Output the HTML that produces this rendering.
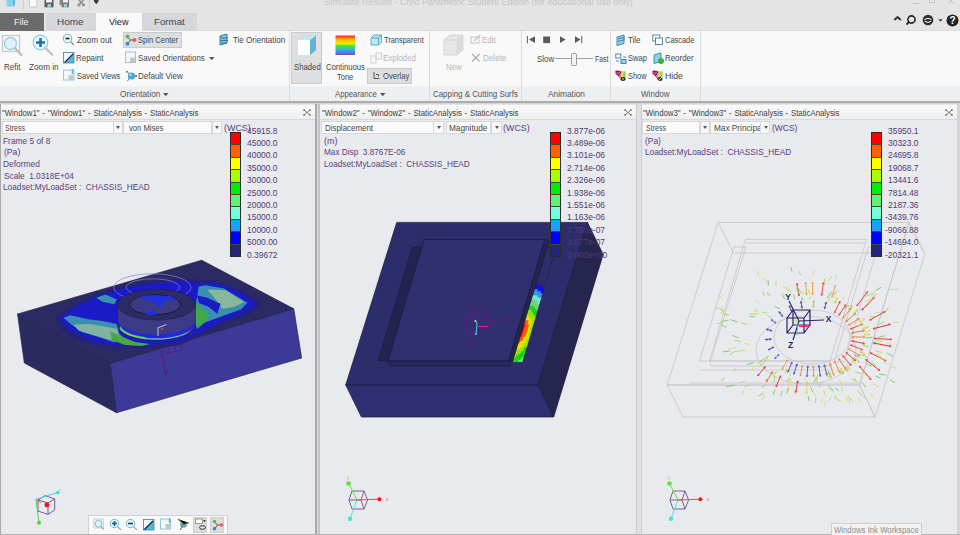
<!DOCTYPE html>
<html><head><meta charset="utf-8">
<style>
*{box-sizing:border-box}
body{margin:0;width:960px;height:535px;overflow:hidden;background:#e4e4e4;font-family:"Liberation Sans", sans-serif;position:relative}
.a{position:absolute}
svg{position:absolute;overflow:visible}
.t{position:absolute;white-space:nowrap;font-size:8.3px;color:#474747;line-height:10px}
.tab{position:absolute;white-space:nowrap;font-size:9.8px;color:#5a5a5a;line-height:12px}
.lg{position:absolute;white-space:nowrap;font-size:9.2px;color:#4e3c74;line-height:12px;transform:scaleX(0.92);transform-origin:0 0}
.info{position:absolute;white-space:nowrap;font-size:8.3px;color:#5a3f7e;line-height:11.5px}
.dd{position:absolute;background:#fbfbfb;border:1px solid #d8d8d8;height:13.5px;font-size:8.3px;color:#474747;line-height:11.5px;padding-left:3.5px;white-space:nowrap;overflow:hidden}
.ddb{position:absolute;background:#f7f7f7;border:1px solid #d8d8d8;height:13.5px}
.ddb:after{content:"";position:absolute;left:2.5px;top:4.5px;border-left:2.8px solid transparent;border-right:2.8px solid transparent;border-top:3.2px solid #555}
.ttl{position:absolute;white-space:nowrap;font-size:8.8px;color:#555;line-height:12px}
.glab{position:absolute;white-space:nowrap;font-size:8.3px;color:#5a5a5a;line-height:10px}
.dis{color:#b5b5b5}
.ft{position:absolute;white-space:pre;transform-origin:0 0}
.btn{position:absolute;background:#dedfe1;border:1px solid #c9cacc}
.panel{position:absolute;top:104px;height:429.5px;background:#e9eaee;border-top:1.5px solid #e4e4e4}
.tbar{position:absolute;left:0;top:0;right:0;height:15px;background:linear-gradient(#fafafa,#eeeeee);border-bottom:1px solid #d9d9d9}
.x{position:absolute;top:5px;width:7.5px;height:6px}
</style></head><body>


<div class="a" style="left:0;top:0;width:960px;height:31px;background:#e4e4e4;border-bottom:1px solid #dadada"></div>
<div class="t" style="left:324.5px;top:-3px;font-size:9px;color:#c4c4c4">Simulate Results - Creo Parametric Student Edition (for educational use only)</div>
<svg style="left:6px;top:-1px" width="10" height="9"><path d="M0.5 0 H7 V6 L5.5 7.8 H0.5 Z" fill="#86d3ef"/><path d="M7 0 H9 V6 L7 7.8 Z" fill="#5fb4da"/></svg>
<div class="a" style="left:23px;top:0;width:1px;height:9.5px;background:#d0d0d0"></div>
<svg style="left:29px;top:-1px" width="10" height="9"><path d="M0.5 0 H8 V8 H0.5 Z" fill="#fafafa" stroke="#c4c4c4" stroke-width="0.9"/></svg>
<svg style="left:44px;top:-1px" width="11" height="9"><path d="M0.5 0 H9.5 V8.3 H0.5 Z" fill="#5a5a5a"/><rect x="2" y="0" width="6" height="3.5" fill="#f0f0f0"/><rect x="3.5" y="5" width="3.5" height="3.3" fill="#8fcfe3"/></svg>
<svg style="left:59px;top:-1px" width="11" height="9"><path d="M0.5 0 H3 V6 H0.5 Z" fill="#8a8a8a"/><path d="M2.5 0 H10 V8.3 H2.5 Z" fill="#7a7a7a"/><rect x="4" y="0" width="5" height="3.5" fill="#f0f0f0"/><rect x="5" y="5" width="3" height="3.3" fill="#8fcfe3"/></svg>
<svg style="left:76.5px;top:-1px" width="9" height="8"><path d="M1 0 L7.5 6.5 M7.5 0 L1 6.5" stroke="#8a8a8a" stroke-width="1.3"/><circle cx="2" cy="6" r="1.3" fill="none" stroke="#8a8a8a" stroke-width="0.8"/><circle cx="6.5" cy="6" r="1.3" fill="none" stroke="#8a8a8a" stroke-width="0.8"/></svg>
<div class="a" style="left:88.5px;top:0;width:1px;height:9.5px;background:#d0d0d0"></div>
<svg style="left:94px;top:-1px" width="5" height="6"><path d="M0 0 H4.5 V2.5 L2.25 5.3 L0 2.5 Z" fill="#3a3a3a"/></svg>
<div class="a" style="left:0;top:13px;width:44.3px;height:17.5px;background:#6b6b6b"></div>
<div class="a" style="left:45.8px;top:13.2px;width:50.2px;height:17.8px;background:#d5d7da"></div>
<div class="a" style="left:96px;top:13px;width:46px;height:18px;background:#f9f9f9"></div>
<div class="a" style="left:142px;top:13.2px;width:55px;height:17.8px;background:#d5d7da"></div>


<div class="a" style="left:912.5px;top:2.8px;width:6.5px;height:1px;background:#c4c4c4"></div>
<div class="a" style="left:929px;top:-1px;width:6px;height:4px;border:1px solid #c8c8c8;border-top:none"></div>
<svg style="left:947px;top:-2px" width="8" height="6"><path d="M1 0 L7 6 M7 0 L1 6" stroke="#c8c8c8" stroke-width="1"/></svg>
<svg style="left:893px;top:15px" width="9" height="7"><path d="M1.3 5 L4.5 2 L7.7 5" stroke="#333" stroke-width="2" fill="none"/></svg>
<svg style="left:905px;top:14px" width="12" height="12"><circle cx="6.5" cy="5.5" r="3.6" stroke="#222" stroke-width="1.6" fill="none"/><path d="M4 8 L1.5 10.5" stroke="#222" stroke-width="1.8"/></svg>
<svg style="left:921.5px;top:14px" width="12" height="12"><circle cx="6" cy="6" r="5.3" fill="#2e2e2e"/><path d="M2.5 5.5 Q6 3 9.5 5.5 M2.8 7.3 Q6 9.5 9.2 7.3" stroke="#fff" stroke-width="1" fill="none"/></svg>
<svg style="left:937.8px;top:18.5px" width="6" height="4"><path d="M0.3 0.3 L4.7 0.3 L2.5 2.8 Z" fill="#444"/></svg>
<svg style="left:946px;top:13.5px" width="13" height="13"><circle cx="6.5" cy="6.5" r="6" fill="#222"/><text x="6.5" y="10.3" text-anchor="middle" font-family="Liberation Sans" font-weight="bold" font-size="10" fill="#fff">?</text></svg>


<div class="a" style="left:0;top:31px;width:960px;height:55px;background:#f9f9f9"></div>
<div class="a" style="left:0;top:86px;width:960px;height:15.3px;background:#eeeff1;border-top:1px solid #f3f3f3"></div>
<div class="a" style="left:289px;top:31px;width:1px;height:70px;background:#dcdcdc"></div>
<div class="a" style="left:429px;top:31px;width:1px;height:70px;background:#dcdcdc"></div>
<div class="a" style="left:521px;top:31px;width:1px;height:70px;background:#dcdcdc"></div>
<div class="a" style="left:610px;top:31px;width:1px;height:70px;background:#dcdcdc"></div>
<div class="a" style="left:699.5px;top:31px;width:1px;height:70px;background:#dcdcdc"></div>
<div class="a" style="left:0;top:101.3px;width:960px;height:1.6px;background:#acacac"></div><div class="a" style="left:0;top:102.9px;width:960px;height:1.1px;background:#d6d6d6"></div>


<svg style="left:1px;top:34px" width="24" height="24"><rect x="1.5" y="1.5" width="17" height="16" fill="#f4f6f7" stroke="#c7c7c7" stroke-width="1.2"/><circle cx="9.5" cy="9.5" r="6" fill="#dff3f8" stroke="#9ccfdf" stroke-width="1.3"/><path d="M13.8 14 L20.5 21" stroke="#bdbdbd" stroke-width="2.4" stroke-linecap="round"/></svg>
<svg style="left:31px;top:33px" width="24" height="24"><circle cx="9.5" cy="9.5" r="7.3" fill="#eef8fb" stroke="#8ccfe0" stroke-width="1.2"/><path d="M9.5 5 V14 M5 9.5 H14" stroke="#1a73a0" stroke-width="2.6"/><path d="M14.5 15 L21 21.5" stroke="#c2c2c2" stroke-width="2.4" stroke-linecap="round"/></svg>
<svg style="left:62px;top:33px" width="14" height="14"><circle cx="5.5" cy="5.5" r="4.2" fill="#eaf6f9" stroke="#6fbcd3" stroke-width="1.1"/><path d="M3.5 5.5 H7.5" stroke="#222" stroke-width="1.6"/><path d="M8.5 8.5 L12 12" stroke="#999" stroke-width="1.5"/></svg>
<svg style="left:63px;top:52px" width="12" height="12"><rect x="0.5" y="0.5" width="10.5" height="10.5" fill="#5ab5d6" stroke="#3a8fb0" stroke-width="0.8"/><path d="M1 11 L11 1 L11 11 Z" fill="#ffffff" opacity="0.0"/><path d="M1.5 10.5 L10 2" stroke="#1a2a40" stroke-width="1.3"/><path d="M1 1 L10 1 L1 10 Z" fill="#f4f7f8"/></svg>
<svg style="left:63px;top:69px" width="12" height="12"><rect x="0.5" y="1" width="10.5" height="10" fill="#f2f7f9" stroke="#8ecbe0" stroke-width="1"/><rect x="5.5" y="6" width="5" height="5" fill="#c6c6c6"/><path d="M9.5 0 V5" stroke="#5ab5d6" stroke-width="1.4"/></svg>
<div class="btn" style="left:123px;top:32px;width:58.5px;height:15.5px"></div>
<svg style="left:125px;top:34px" width="12" height="12"><path d="M2 2.5 L5.5 6 L10 6 M5.5 6 L2.5 10" stroke="#555" stroke-width="1" fill="none"/><circle cx="2.5" cy="2.5" r="2" fill="#6ab04c"/><circle cx="9.5" cy="6" r="2" fill="#e06060"/><circle cx="2.5" cy="9.8" r="2" fill="#3a8fc0"/></svg>
<svg style="left:125px;top:51px" width="12" height="13"><rect x="0.5" y="1" width="10" height="10.5" fill="#f5f8f9" stroke="#8ecbe0" stroke-width="1"/><rect x="5" y="6.5" width="5.5" height="5" fill="#c6c6c6"/></svg>
<svg style="left:208.5px;top:56.5px" width="6" height="4"><path d="M0 0 H5.5 L2.75 3.2 Z" fill="#555"/></svg>
<svg style="left:124.5px;top:70px" width="13" height="12"><path d="M1.5 1 L6 5.5 L12 6 M6 5.5 L2.5 11" stroke="#8a7a5a" stroke-width="1" fill="none"/><circle cx="6.5" cy="6" r="3.6" fill="#45a8d8"/><circle cx="5.5" cy="5" r="1.4" fill="#9ad4ee"/><path d="M1 1 L3 1.5 L1.5 3 Z M12.5 6 L10.5 4.8 L10.5 7.2 Z" fill="#555"/></svg>
<svg style="left:218px;top:33px" width="12" height="13"><path d="M2 3 L9 1 V10 L2 12 Z" fill="#7fc3e0" stroke="#2f6f96" stroke-width="0.9"/><path d="M3 5 H10 M3 7.5 H10 M3 10 H9" stroke="#2f6f96" stroke-width="0.9"/></svg>
<svg style="left:163px;top:93px" width="6" height="4"><path d="M0 0 H5.5 L2.75 3.2 Z" fill="#555"/></svg>


<div class="btn" style="left:291.2px;top:31.9px;width:31.2px;height:52.5px"></div>
<svg style="left:296px;top:34px" width="22" height="24"><path d="M2 6 L8 1.5 L20 1.5 L20 16 L14 21 L2 21 Z" fill="#7cc8e4"/><path d="M2 6 L14 6 L14 21 L2 21 Z" fill="#ffffff"/><path d="M14 6 L20 1.5 L20 16 L14 21 Z" fill="#63b3d6"/><path d="M2 6 L8 1.5 L20 1.5 L14 6 Z" fill="#c3e7f5"/></svg>
<svg style="left:335px;top:34.5px" width="21" height="20"><defs><linearGradient id="rb" x1="0" y1="0" x2="0" y2="1"><stop offset="0" stop-color="#ff2020"/><stop offset="0.2" stop-color="#ffb000"/><stop offset="0.4" stop-color="#f0f000"/><stop offset="0.55" stop-color="#40e040"/><stop offset="0.75" stop-color="#30b0f0"/><stop offset="1" stop-color="#8040d0"/></linearGradient></defs><rect x="0.5" y="0.5" width="19.5" height="19.5" fill="url(#rb)"/></svg>
<svg style="left:370px;top:33.5px" width="13" height="12"><path d="M1 4 L4 1 L11.5 1 L11.5 8 L8.5 11 L1 11 Z" fill="#bfe6f4" stroke="#4aa6cc" stroke-width="0.9"/><path d="M1 4 H8.5 V11 M8.5 4 L11.5 1" stroke="#4aa6cc" stroke-width="0.9" fill="none"/></svg>
<svg style="left:370px;top:52px" width="13" height="12"><rect x="1" y="4" width="5" height="7" fill="none" stroke="#cfcfcf" stroke-width="1"/><rect x="6" y="1" width="5.5" height="6" fill="none" stroke="#cfcfcf" stroke-width="1"/></svg>
<div class="btn" style="left:367.4px;top:67.5px;width:45px;height:16.1px"></div>
<svg style="left:371.5px;top:71px" width="9" height="10"><path d="M2 1 V7.5 H7.5 M4 3.5 H6.5 V5.5" stroke="#555" stroke-width="1" fill="none"/></svg>
<svg style="left:380px;top:93px" width="6" height="4"><path d="M0 0 H5.5 L2.75 3.2 Z" fill="#555"/></svg>


<svg style="left:442px;top:33px" width="23" height="24"><path d="M2 7 L8 2 L21 2 L21 17 L15 22 L2 22 Z" fill="#e6e6e6" stroke="#d0d0d0" stroke-width="0.8"/><path d="M2 7 H15 V22 M15 7 L21 2" stroke="#d0d0d0" stroke-width="0.8" fill="none"/><path d="M15 7 L21 2 L21 17 L15 22 Z" fill="#dadada"/></svg>
<svg style="left:470px;top:34px" width="12" height="11"><rect x="1" y="3" width="8" height="6" fill="none" stroke="#c4c4c4" stroke-width="1"/><path d="M4 7 L10 1" stroke="#c4c4c4" stroke-width="1.5"/></svg>
<svg style="left:470.5px;top:53px" width="10" height="10"><path d="M1 1 L8.5 8.5 M8.5 1 L1 8.5" stroke="#b0b0b0" stroke-width="1.3"/></svg>


<svg style="left:526px;top:35px" width="60" height="10"><path d="M1.4 1 V8.3" stroke="#5a5a5a" stroke-width="1"/><path d="M9 1.2 V8 L3 4.6 Z" fill="#5a5a5a"/><rect x="17.2" y="1.5" width="6.9" height="6.6" fill="#5a5a5a"/><path d="M34 1.2 V8 L39.6 4.6 Z" fill="#5a5a5a"/><path d="M49 1.2 V8 L54.6 4.6 Z" fill="#5a5a5a"/><path d="M55.8 1 V8.3" stroke="#5a5a5a" stroke-width="1"/></svg>
<div class="a" style="left:555px;top:58px;width:37.5px;height:1px;background:#a4a4a4"></div>
<div class="a" style="left:570.6px;top:52.5px;width:6px;height:13px;background:#f3f3f3;border:1px solid #9a9a9a;border-radius:1.5px"></div>


<svg style="left:614.5px;top:34px" width="12" height="12"><path d="M2 3 L9 1 V9.5 L2 11.5 Z" fill="#8fd0ea" stroke="#3a7fa6" stroke-width="0.9"/><path d="M3 5 L10 3 M3 7.5 L10 5.5" stroke="#3a7fa6" stroke-width="0.9"/></svg>
<svg style="left:614.5px;top:52.5px" width="12" height="12"><rect x="0.8" y="1" width="5" height="4" fill="#fff" stroke="#3a7fa6" stroke-width="0.9"/><rect x="6" y="6.5" width="5" height="4" fill="#8fd0ea" stroke="#3a7fa6" stroke-width="0.9"/><path d="M1 8 H4 M8 4 H11" stroke="#3a7fa6" stroke-width="0.9"/></svg>
<svg style="left:614.5px;top:70px" width="12" height="12"><defs><linearGradient id="pal" x1="0" y1="0" x2="1" y2="0"><stop offset="0" stop-color="#c02060"/><stop offset="0.35" stop-color="#e040c0"/><stop offset="0.65" stop-color="#f0e040"/><stop offset="1" stop-color="#60d060"/></linearGradient></defs><path d="M0.5 1 L3 0.5 L10.5 1.5 L10.5 8 L6 10 L3 6 L0.5 4 Z" fill="url(#pal)"/><path d="M0.5 1 L6 2 L3 6" stroke="#2a2a2a" stroke-width="0.8" fill="none"/><ellipse cx="8" cy="9" rx="2.6" ry="1.9" fill="#2a2a2a"/><circle cx="8" cy="9" r="0.8" fill="#eee"/></svg>
<svg style="left:652px;top:34px" width="12" height="12"><rect x="0.8" y="1" width="7" height="6" fill="#fff" stroke="#3a7fa6" stroke-width="0.9"/><rect x="3.5" y="4" width="7" height="6.5" fill="#fff" stroke="#3a7fa6" stroke-width="0.9"/></svg>
<svg style="left:652px;top:52px" width="13" height="13"><path d="M2 3 L9 1 V9.5 L2 11.5 Z" fill="#8fd0ea" stroke="#3a7fa6" stroke-width="0.9"/><circle cx="9" cy="9" r="3" fill="#3cb040"/></svg>
<svg style="left:652px;top:70px" width="12" height="12"><path d="M0.5 1 L3 0.5 L10.5 1.5 L10.5 8 L6 10 L3 6 L0.5 4 Z" fill="url(#pal)"/><path d="M0.5 1 L6 2 L3 6" stroke="#2a2a2a" stroke-width="0.8" fill="none"/><ellipse cx="8" cy="9" rx="2.6" ry="1.9" fill="#2a2a2a"/><path d="M5.5 11 L10.5 7" stroke="#eee" stroke-width="0.8"/></svg>


<div class="a" style="left:0;top:104px;width:960px;height:431px;background:#e0e0e4"></div>
<div class="a" style="left:0;top:104px;width:1.3px;height:431px;background:#a9a9a9"></div>
<div class="a" style="left:315.3px;top:104px;width:2.2px;height:431px;background:#a9a9a9"></div><div class="a" style="left:318.2px;top:104px;width:1.5px;height:431px;background:#c4c4c6"></div>
<div class="a" style="left:636.2px;top:104px;width:1px;height:431px;background:#cdcdd1"></div>
<div class="a" style="left:641px;top:104px;width:1px;height:431px;background:#cdcdd1"></div>
<div class="a" style="left:957px;top:104px;width:3px;height:431px;background:#d4d4d4"></div>
<div class="a" style="left:0;top:533.5px;width:960px;height:1.5px;background:#b5b5b5"></div>

<div class="panel" style="left:1.3px;width:314px">
<div class="tbar"></div>
<svg style="left:301.5px;top:4px" width="8" height="7"><path d="M1.2 1.2 L6.8 5.8 M6.8 1.2 L1.2 5.8" stroke="#707070" stroke-width="0.9"/><path d="M0.3 0.3 h1.7 v1.7 h-1.7 Z M6 0.3 h1.7 v1.7 h-1.7 Z M0.3 5 h1.7 v1.7 h-1.7 Z M6 5 h1.7 v1.7 h-1.7 Z" fill="#7a7a7a"/></svg>
</div>
<div class="panel" style="left:320.4px;width:315.8px">
<div class="tbar"></div>
<svg style="left:303.3px;top:4px" width="8" height="7"><path d="M1.2 1.2 L6.8 5.8 M6.8 1.2 L1.2 5.8" stroke="#707070" stroke-width="0.9"/><path d="M0.3 0.3 h1.7 v1.7 h-1.7 Z M6 0.3 h1.7 v1.7 h-1.7 Z M0.3 5 h1.7 v1.7 h-1.7 Z M6 5 h1.7 v1.7 h-1.7 Z" fill="#7a7a7a"/></svg>
</div>
<div class="panel" style="left:642px;width:315px">
<div class="tbar"></div>
<svg style="left:302.5px;top:4px" width="8" height="7"><path d="M1.2 1.2 L6.8 5.8 M6.8 1.2 L1.2 5.8" stroke="#707070" stroke-width="0.9"/><path d="M0.3 0.3 h1.7 v1.7 h-1.7 Z M6 0.3 h1.7 v1.7 h-1.7 Z M0.3 5 h1.7 v1.7 h-1.7 Z M6 5 h1.7 v1.7 h-1.7 Z" fill="#7a7a7a"/></svg>
</div>

<div class="dd" style="left:1.5px;top:120.8px;width:112.3px"></div>
<div class="ddb" style="left:112.8px;top:120.8px;width:10.5px"></div>
<div class="dd" style="left:123.3px;top:120.8px;width:89.2px"></div>
<div class="ddb" style="left:211.8px;top:120.8px;width:10.5px"></div>

<div class="dd" style="left:321.4px;top:120.8px;width:112.9px"></div>
<div class="ddb" style="left:433.3px;top:120.8px;width:10.5px"></div>
<div class="dd" style="left:445.5px;top:120.8px;width:45.5px"></div>
<div class="ddb" style="left:491px;top:120.8px;width:10.5px"></div>

<div class="dd" style="left:642px;top:120.8px;width:58px"></div>
<div class="ddb" style="left:699.5px;top:120.8px;width:10px"></div>
<div class="dd" style="left:710.2px;top:120.8px;width:50.8px"></div>
<div class="ddb" style="left:760.2px;top:120.8px;width:10px"></div>




<svg style="left:0;top:0" width="960" height="535" viewBox="0 0 960 535"><polygon points="17.5,314.0 201.7,260.2 293.8,308.8 110.3,363.5" fill="#2c2a62" stroke="#1c1b40" stroke-width="0.6" />
<polygon points="17.5,314.0 110.3,363.5 116.5,412.8 24.3,363.0" fill="#2b2a5e" stroke="#1c1b40" stroke-width="0.6" />
<polygon points="110.3,363.5 293.8,308.8 301.7,358.0 116.5,412.8" fill="#3c3a96" stroke="#1c1b40" stroke-width="0.6" />
<polygon points="55.0,318.0 74.0,305.0 96.0,294.0 120.0,286.0 150.0,281.0 180.0,278.0 215.0,280.0 242.0,290.0 262.0,304.0 248.0,315.0 226.0,324.0 205.0,334.0 180.0,345.0 150.0,349.0 120.0,349.0 100.0,347.0 80.0,341.0 62.0,330.0" fill="#24237c" stroke="none" stroke-width="0" />
<polygon points="59.5,317.7 75.0,307.0 96.0,297.0 120.0,289.0 150.0,284.0 180.0,281.0 195.4,283.5 215.0,283.0 240.0,292.0 257.6,303.7 245.0,312.0 224.0,320.5 205.0,330.0 180.0,341.0 150.0,345.0 125.0,345.0 110.4,344.7 90.0,340.0 70.0,330.0" fill="#1a1ac6" stroke="none" stroke-width="0" />
<polygon points="96.1,297.8 105.6,294.6 116.8,299.4 114.4,304.2 102.5,301.8" fill="#3a8fb0" stroke="none" stroke-width="0" />
<polygon points="63.5,317.7 70.7,315.3 88.2,319.3 102.5,320.9 116.8,324.0 119.2,333.6 126.3,340.0 113.6,342.3 97.7,336.8 81.8,332.0 70.7,324.0" fill="#3a8fb0" stroke="none" stroke-width="0" />
<polygon points="73.8,324.8 89.7,324.0 104.0,326.4 116.8,328.8 120.0,338.4 110.4,340.0 94.5,335.2 78.6,330.4" fill="#80b4a0" stroke="none" stroke-width="0" />
<polygon points="110.0,331.0 120.0,336.0 135.0,342.0 150.0,344.0 142.0,346.0 125.0,345.0 112.0,340.0" fill="#4aa840" stroke="none" stroke-width="0" />
<polygon points="198.7,286.8 205.5,285.2 224.0,288.5 247.5,302.8 240.8,309.5 224.0,315.4 210.5,320.5 196.2,325.5 195.4,307.0" fill="#3a8fb0" stroke="none" stroke-width="0" />
<polygon points="207.0,289.4 225.6,290.2 244.0,302.0 234.0,307.0 222.3,308.7 213.9,297.0" fill="#88b89c" stroke="none" stroke-width="0" />
<polygon points="197.0,295.3 207.0,297.8 220.6,303.7 217.2,313.7 208.8,307.0 199.0,303.0" fill="#1a1ac6" stroke="none" stroke-width="0" />
<polygon points="196.0,303.0 204.0,310.0 209.0,316.0 205.5,322.0 197.0,328.9 194.0,320.0" fill="#40a848" stroke="none" stroke-width="0" />
<ellipse cx="152.4" cy="287.4" rx="38.6" ry="13.6" fill="none" stroke="#8a7fd8" stroke-width="0.7"/>
<ellipse cx="152.9" cy="287.4" rx="26.7" ry="8.6" fill="none" stroke="#8a7fd8" stroke-width="0.7"/>
<path d="M117.6 304.7 V325 A38.9 15.3 0 0 0 195.4 325 V304.7 Z" fill="#3d3b86" stroke="#1e1d45" stroke-width="0.6"/>
<path d="M118.1 325.5 A38.9 15.3 0 0 0 194.9 325.5 L195.4 319 A38.9 15.3 0 0 1 117.6 319 Z" fill="#2426d8" opacity="0.95"/>
<path d="M121.6 330 A35.9 13.3 0 0 0 191.4 329 L192.4 327.5 A36.9 13.8 0 0 1 120.6 328 Z" fill="#60d0c0" opacity="0.85"/>
<path d="M119.6 329 A35.9 13.3 0 0 0 146.5 339 L144.5 337 A35.9 13.3 0 0 1 120.6 326 Z" fill="#70e040" opacity="0.8"/>
<ellipse cx="156.5" cy="304.7" rx="38.9" ry="15.3" fill="#2c2b64" stroke="#1e1d45" stroke-width="0.6"/>
<ellipse cx="155.1" cy="304.75" rx="25.4" ry="10" fill="#3c3a85" stroke="#1a193e" stroke-width="1"/>
<polygon points="140.0,296.0 150.0,295.5 170.0,296.0 176.0,299.0 165.0,301.0 160.0,308.0 152.0,301.0 142.0,299.0" fill="#2030e0" stroke="none" stroke-width="0" />
<ellipse cx="151" cy="313" rx="6" ry="2" fill="#2030e8"/>
<path d="M158 336 V327.8 L166.5 324.5" stroke="#a0e8f0" stroke-width="0.9" fill="none"/><circle cx="162" cy="329" r="1.2" fill="#e03040"/>
<path d="M161 350 L166 375 M162 351 L169 353 L182 350 L181 344 M169 353 L168 346 M176 346 L174 352" stroke="#5a1a7a" stroke-width="0.9" fill="none"/><path d="M164 369 L166 375 L168 369" stroke="#5a1a7a" stroke-width="0.9" fill="none"/><path d="M189 327 L192 336" stroke="#5a1a7a" stroke-width="1" fill="none"/><polygon points="396.7,222.4 587.5,222.4 538.0,385.0 345.7,385.0" fill="#2e2d6c" stroke="#1a1940" stroke-width="0.7" />
<polygon points="345.7,385.0 538.0,385.0 553.7,417.0 361.4,417.0" fill="#2f2e72" stroke="#1a1940" stroke-width="0.7" />
<polygon points="587.5,222.4 603.2,254.4 553.7,417.0 538.0,385.0" fill="#26254e" stroke="#1a1940" stroke-width="0.7" />
<polygon points="412.4,247.0 424.5,247.0 389.0,361.0 378.0,361.0" fill="#242350" stroke="#1a1940" stroke-width="0.6" />
<polygon points="546.8,247.0 556.1,247.0 522.6,362.0 512.5,362.0" fill="#2e2d6c" stroke="#1a1940" stroke-width="0.6" />
<polygon points="537.4,279.0 539.3,279.0 538.6,281.1 536.8,281.1" fill="#2e2d6c" stroke="#2e2d6c" stroke-width="0.3" />
<polygon points="539.3,279.0 541.1,279.0 540.5,281.1 538.6,281.1" fill="#2e2d6c" stroke="#2e2d6c" stroke-width="0.3" />
<polygon points="541.1,279.0 542.9,279.0 542.3,281.1 540.5,281.1" fill="#2e2d6c" stroke="#2e2d6c" stroke-width="0.3" />
<polygon points="542.9,279.0 544.8,279.0 544.2,281.1 542.3,281.1" fill="#2e2d6c" stroke="#2e2d6c" stroke-width="0.3" />
<polygon points="544.8,279.0 546.6,279.0 546.0,281.1 544.2,281.1" fill="#2e2d6c" stroke="#2e2d6c" stroke-width="0.3" />
<polygon points="536.8,281.1 538.6,281.1 538.0,283.1 536.2,283.1" fill="#2e2d6c" stroke="#2e2d6c" stroke-width="0.3" />
<polygon points="538.6,281.1 540.5,281.1 539.9,283.1 538.0,283.1" fill="#2e2d6c" stroke="#2e2d6c" stroke-width="0.3" />
<polygon points="540.5,281.1 542.3,281.1 541.7,283.1 539.9,283.1" fill="#2e2d6c" stroke="#2e2d6c" stroke-width="0.3" />
<polygon points="542.3,281.1 544.2,281.1 543.6,283.1 541.7,283.1" fill="#2e2d6c" stroke="#2e2d6c" stroke-width="0.3" />
<polygon points="544.2,281.1 546.0,281.1 545.4,283.1 543.6,283.1" fill="#2e2d6c" stroke="#2e2d6c" stroke-width="0.3" />
<polygon points="536.2,283.1 538.0,283.1 537.4,285.2 535.5,285.2" fill="#2e2d6c" stroke="#2e2d6c" stroke-width="0.3" />
<polygon points="538.0,283.1 539.9,283.1 539.2,285.2 537.4,285.2" fill="#2e2d6c" stroke="#2e2d6c" stroke-width="0.3" />
<polygon points="539.9,283.1 541.7,283.1 541.1,285.2 539.2,285.2" fill="#2e2d6c" stroke="#2e2d6c" stroke-width="0.3" />
<polygon points="541.7,283.1 543.6,283.1 543.0,285.2 541.1,285.2" fill="#2e2d6c" stroke="#2e2d6c" stroke-width="0.3" />
<polygon points="543.6,283.1 545.4,283.1 544.8,285.2 543.0,285.2" fill="#2e2d6c" stroke="#2e2d6c" stroke-width="0.3" />
<polygon points="535.5,285.2 537.4,285.2 536.8,287.3 534.9,287.3" fill="#1010f0" stroke="#1010f0" stroke-width="0.3" />
<polygon points="537.4,285.2 539.2,285.2 538.6,287.3 536.8,287.3" fill="#1010f0" stroke="#1010f0" stroke-width="0.3" />
<polygon points="539.2,285.2 541.1,285.2 540.5,287.3 538.6,287.3" fill="#1010f0" stroke="#1010f0" stroke-width="0.3" />
<polygon points="541.1,285.2 543.0,285.2 542.3,287.3 540.5,287.3" fill="#2e2d6c" stroke="#2e2d6c" stroke-width="0.3" />
<polygon points="543.0,285.2 544.8,285.2 544.2,287.3 542.3,287.3" fill="#2e2d6c" stroke="#2e2d6c" stroke-width="0.3" />
<polygon points="534.9,287.3 536.8,287.3 536.1,289.4 534.3,289.4" fill="#1010f0" stroke="#1010f0" stroke-width="0.3" />
<polygon points="536.8,287.3 538.6,287.3 538.0,289.4 536.1,289.4" fill="#1010f0" stroke="#1010f0" stroke-width="0.3" />
<polygon points="538.6,287.3 540.5,287.3 539.9,289.4 538.0,289.4" fill="#1010f0" stroke="#1010f0" stroke-width="0.3" />
<polygon points="540.5,287.3 542.3,287.3 541.7,289.4 539.9,289.4" fill="#1010f0" stroke="#1010f0" stroke-width="0.3" />
<polygon points="542.3,287.3 544.2,287.3 543.6,289.4 541.7,289.4" fill="#1010f0" stroke="#1010f0" stroke-width="0.3" />
<polygon points="534.3,289.4 536.1,289.4 535.5,291.4 533.6,291.4" fill="#30a0f0" stroke="#30a0f0" stroke-width="0.3" />
<polygon points="536.1,289.4 538.0,289.4 537.4,291.4 535.5,291.4" fill="#30a0f0" stroke="#30a0f0" stroke-width="0.3" />
<polygon points="538.0,289.4 539.9,289.4 539.2,291.4 537.4,291.4" fill="#1010f0" stroke="#1010f0" stroke-width="0.3" />
<polygon points="539.9,289.4 541.7,289.4 541.1,291.4 539.2,291.4" fill="#1010f0" stroke="#1010f0" stroke-width="0.3" />
<polygon points="541.7,289.4 543.6,289.4 543.0,291.4 541.1,291.4" fill="#1010f0" stroke="#1010f0" stroke-width="0.3" />
<polygon points="533.6,291.4 535.5,291.4 534.9,293.5 533.0,293.5" fill="#30a0f0" stroke="#30a0f0" stroke-width="0.3" />
<polygon points="535.5,291.4 537.4,291.4 536.8,293.5 534.9,293.5" fill="#30a0f0" stroke="#30a0f0" stroke-width="0.3" />
<polygon points="537.4,291.4 539.2,291.4 538.6,293.5 536.8,293.5" fill="#30a0f0" stroke="#30a0f0" stroke-width="0.3" />
<polygon points="539.2,291.4 541.1,291.4 540.5,293.5 538.6,293.5" fill="#30a0f0" stroke="#30a0f0" stroke-width="0.3" />
<polygon points="541.1,291.4 543.0,291.4 542.4,293.5 540.5,293.5" fill="#1010f0" stroke="#1010f0" stroke-width="0.3" />
<polygon points="533.0,293.5 534.9,293.5 534.3,295.6 532.4,295.6" fill="#30a0f0" stroke="#30a0f0" stroke-width="0.3" />
<polygon points="534.9,293.5 536.8,293.5 536.1,295.6 534.3,295.6" fill="#30a0f0" stroke="#30a0f0" stroke-width="0.3" />
<polygon points="536.8,293.5 538.6,293.5 538.0,295.6 536.1,295.6" fill="#30a0f0" stroke="#30a0f0" stroke-width="0.3" />
<polygon points="538.6,293.5 540.5,293.5 539.9,295.6 538.0,295.6" fill="#30a0f0" stroke="#30a0f0" stroke-width="0.3" />
<polygon points="540.5,293.5 542.4,293.5 541.8,295.6 539.9,295.6" fill="#30a0f0" stroke="#30a0f0" stroke-width="0.3" />
<polygon points="532.4,295.6 534.3,295.6 533.6,297.7 531.7,297.7" fill="#80f0d8" stroke="#80f0d8" stroke-width="0.3" />
<polygon points="534.3,295.6 536.1,295.6 535.5,297.7 533.6,297.7" fill="#80f0d8" stroke="#80f0d8" stroke-width="0.3" />
<polygon points="536.1,295.6 538.0,295.6 537.4,297.7 535.5,297.7" fill="#80f0d8" stroke="#80f0d8" stroke-width="0.3" />
<polygon points="538.0,295.6 539.9,295.6 539.3,297.7 537.4,297.7" fill="#30a0f0" stroke="#30a0f0" stroke-width="0.3" />
<polygon points="539.9,295.6 541.8,295.6 541.2,297.7 539.3,297.7" fill="#30a0f0" stroke="#30a0f0" stroke-width="0.3" />
<polygon points="531.7,297.7 533.6,297.7 533.0,299.8 531.1,299.8" fill="#80f0d8" stroke="#80f0d8" stroke-width="0.3" />
<polygon points="533.6,297.7 535.5,297.7 534.9,299.8 533.0,299.8" fill="#80f0d8" stroke="#80f0d8" stroke-width="0.3" />
<polygon points="535.5,297.7 537.4,297.7 536.8,299.8 534.9,299.8" fill="#80f0d8" stroke="#80f0d8" stroke-width="0.3" />
<polygon points="537.4,297.7 539.3,297.7 538.7,299.8 536.8,299.8" fill="#80f0d8" stroke="#80f0d8" stroke-width="0.3" />
<polygon points="539.3,297.7 541.2,297.7 540.6,299.8 538.7,299.8" fill="#80f0d8" stroke="#80f0d8" stroke-width="0.3" />
<polygon points="531.1,299.8 533.0,299.8 532.4,301.8 530.5,301.8" fill="#70e080" stroke="#70e080" stroke-width="0.3" />
<polygon points="533.0,299.8 534.9,299.8 534.3,301.8 532.4,301.8" fill="#70e080" stroke="#70e080" stroke-width="0.3" />
<polygon points="534.9,299.8 536.8,299.8 536.2,301.8 534.3,301.8" fill="#80f0d8" stroke="#80f0d8" stroke-width="0.3" />
<polygon points="536.8,299.8 538.7,299.8 538.1,301.8 536.2,301.8" fill="#80f0d8" stroke="#80f0d8" stroke-width="0.3" />
<polygon points="538.7,299.8 540.6,299.8 539.9,301.8 538.1,301.8" fill="#80f0d8" stroke="#80f0d8" stroke-width="0.3" />
<polygon points="530.5,301.8 532.4,301.8 531.8,303.9 529.9,303.9" fill="#70e080" stroke="#70e080" stroke-width="0.3" />
<polygon points="532.4,301.8 534.3,301.8 533.6,303.9 531.8,303.9" fill="#70e080" stroke="#70e080" stroke-width="0.3" />
<polygon points="534.3,301.8 536.2,301.8 535.5,303.9 533.6,303.9" fill="#70e080" stroke="#70e080" stroke-width="0.3" />
<polygon points="536.2,301.8 538.1,301.8 537.4,303.9 535.5,303.9" fill="#70e080" stroke="#70e080" stroke-width="0.3" />
<polygon points="538.1,301.8 539.9,301.8 539.3,303.9 537.4,303.9" fill="#80f0d8" stroke="#80f0d8" stroke-width="0.3" />
<polygon points="529.9,303.9 531.8,303.9 531.1,306.0 529.2,306.0" fill="#70e080" stroke="#70e080" stroke-width="0.3" />
<polygon points="531.8,303.9 533.6,303.9 533.0,306.0 531.1,306.0" fill="#70e080" stroke="#70e080" stroke-width="0.3" />
<polygon points="533.6,303.9 535.5,303.9 534.9,306.0 533.0,306.0" fill="#70e080" stroke="#70e080" stroke-width="0.3" />
<polygon points="535.5,303.9 537.4,303.9 536.8,306.0 534.9,306.0" fill="#70e080" stroke="#70e080" stroke-width="0.3" />
<polygon points="537.4,303.9 539.3,303.9 538.7,306.0 536.8,306.0" fill="#70e080" stroke="#70e080" stroke-width="0.3" />
<polygon points="529.2,306.0 531.1,306.0 530.5,308.1 528.6,308.1" fill="#20d820" stroke="#20d820" stroke-width="0.3" />
<polygon points="531.1,306.0 533.0,306.0 532.4,308.1 530.5,308.1" fill="#20d820" stroke="#20d820" stroke-width="0.3" />
<polygon points="533.0,306.0 534.9,306.0 534.3,308.1 532.4,308.1" fill="#20d820" stroke="#20d820" stroke-width="0.3" />
<polygon points="534.9,306.0 536.8,306.0 536.2,308.1 534.3,308.1" fill="#70e080" stroke="#70e080" stroke-width="0.3" />
<polygon points="536.8,306.0 538.7,306.0 538.1,308.1 536.2,308.1" fill="#70e080" stroke="#70e080" stroke-width="0.3" />
<polygon points="528.6,308.1 530.5,308.1 529.9,310.1 528.0,310.1" fill="#20d820" stroke="#20d820" stroke-width="0.3" />
<polygon points="530.5,308.1 532.4,308.1 531.8,310.1 529.9,310.1" fill="#20d820" stroke="#20d820" stroke-width="0.3" />
<polygon points="532.4,308.1 534.3,308.1 533.7,310.1 531.8,310.1" fill="#20d820" stroke="#20d820" stroke-width="0.3" />
<polygon points="534.3,308.1 536.2,308.1 535.6,310.1 533.7,310.1" fill="#20d820" stroke="#20d820" stroke-width="0.3" />
<polygon points="536.2,308.1 538.1,308.1 537.5,310.1 535.6,310.1" fill="#70e080" stroke="#70e080" stroke-width="0.3" />
<polygon points="528.0,310.1 529.9,310.1 529.2,312.2 527.3,312.2" fill="#a8f000" stroke="#a8f000" stroke-width="0.3" />
<polygon points="529.9,310.1 531.8,310.1 531.2,312.2 529.2,312.2" fill="#a8f000" stroke="#a8f000" stroke-width="0.3" />
<polygon points="531.8,310.1 533.7,310.1 533.1,312.2 531.2,312.2" fill="#20d820" stroke="#20d820" stroke-width="0.3" />
<polygon points="533.7,310.1 535.6,310.1 535.0,312.2 533.1,312.2" fill="#20d820" stroke="#20d820" stroke-width="0.3" />
<polygon points="535.6,310.1 537.5,310.1 536.9,312.2 535.0,312.2" fill="#20d820" stroke="#20d820" stroke-width="0.3" />
<polygon points="527.3,312.2 529.2,312.2 528.6,314.3 526.7,314.3" fill="#a8f000" stroke="#a8f000" stroke-width="0.3" />
<polygon points="529.2,312.2 531.2,312.2 530.5,314.3 528.6,314.3" fill="#a8f000" stroke="#a8f000" stroke-width="0.3" />
<polygon points="531.2,312.2 533.1,312.2 532.5,314.3 530.5,314.3" fill="#a8f000" stroke="#a8f000" stroke-width="0.3" />
<polygon points="533.1,312.2 535.0,312.2 534.4,314.3 532.5,314.3" fill="#20d820" stroke="#20d820" stroke-width="0.3" />
<polygon points="535.0,312.2 536.9,312.2 536.3,314.3 534.4,314.3" fill="#20d820" stroke="#20d820" stroke-width="0.3" />
<polygon points="526.7,314.3 528.6,314.3 528.0,316.4 526.1,316.4" fill="#f8f000" stroke="#f8f000" stroke-width="0.3" />
<polygon points="528.6,314.3 530.5,314.3 529.9,316.4 528.0,316.4" fill="#a8f000" stroke="#a8f000" stroke-width="0.3" />
<polygon points="530.5,314.3 532.5,314.3 531.8,316.4 529.9,316.4" fill="#a8f000" stroke="#a8f000" stroke-width="0.3" />
<polygon points="532.5,314.3 534.4,314.3 533.8,316.4 531.8,316.4" fill="#a8f000" stroke="#a8f000" stroke-width="0.3" />
<polygon points="534.4,314.3 536.3,314.3 535.7,316.4 533.8,316.4" fill="#20d820" stroke="#20d820" stroke-width="0.3" />
<polygon points="526.1,316.4 528.0,316.4 527.4,318.4 525.4,318.4" fill="#f8f000" stroke="#f8f000" stroke-width="0.3" />
<polygon points="528.0,316.4 529.9,316.4 529.3,318.4 527.4,318.4" fill="#f8f000" stroke="#f8f000" stroke-width="0.3" />
<polygon points="529.9,316.4 531.8,316.4 531.2,318.4 529.3,318.4" fill="#a8f000" stroke="#a8f000" stroke-width="0.3" />
<polygon points="531.8,316.4 533.8,316.4 533.2,318.4 531.2,318.4" fill="#a8f000" stroke="#a8f000" stroke-width="0.3" />
<polygon points="533.8,316.4 535.7,316.4 535.1,318.4 533.2,318.4" fill="#a8f000" stroke="#a8f000" stroke-width="0.3" />
<polygon points="525.4,318.4 527.4,318.4 526.7,320.5 524.8,320.5" fill="#f8f000" stroke="#f8f000" stroke-width="0.3" />
<polygon points="527.4,318.4 529.3,318.4 528.7,320.5 526.7,320.5" fill="#f8f000" stroke="#f8f000" stroke-width="0.3" />
<polygon points="529.3,318.4 531.2,318.4 530.6,320.5 528.7,320.5" fill="#f8f000" stroke="#f8f000" stroke-width="0.3" />
<polygon points="531.2,318.4 533.2,318.4 532.5,320.5 530.6,320.5" fill="#a8f000" stroke="#a8f000" stroke-width="0.3" />
<polygon points="533.2,318.4 535.1,318.4 534.5,320.5 532.5,320.5" fill="#a8f000" stroke="#a8f000" stroke-width="0.3" />
<polygon points="524.8,320.5 526.7,320.5 526.1,322.6 524.2,322.6" fill="#ff6000" stroke="#ff6000" stroke-width="0.3" />
<polygon points="526.7,320.5 528.7,320.5 528.1,322.6 526.1,322.6" fill="#ff6000" stroke="#ff6000" stroke-width="0.3" />
<polygon points="528.7,320.5 530.6,320.5 530.0,322.6 528.1,322.6" fill="#f8f000" stroke="#f8f000" stroke-width="0.3" />
<polygon points="530.6,320.5 532.5,320.5 531.9,322.6 530.0,322.6" fill="#f8f000" stroke="#f8f000" stroke-width="0.3" />
<polygon points="532.5,320.5 534.5,320.5 533.9,322.6 531.9,322.6" fill="#a8f000" stroke="#a8f000" stroke-width="0.3" />
<polygon points="524.2,322.6 526.1,322.6 525.5,324.6 523.5,324.6" fill="#ff6000" stroke="#ff6000" stroke-width="0.3" />
<polygon points="526.1,322.6 528.1,322.6 527.4,324.6 525.5,324.6" fill="#ff6000" stroke="#ff6000" stroke-width="0.3" />
<polygon points="528.1,322.6 530.0,322.6 529.4,324.6 527.4,324.6" fill="#f8f000" stroke="#f8f000" stroke-width="0.3" />
<polygon points="530.0,322.6 531.9,322.6 531.3,324.6 529.4,324.6" fill="#f8f000" stroke="#f8f000" stroke-width="0.3" />
<polygon points="531.9,322.6 533.9,322.6 533.3,324.6 531.3,324.6" fill="#a8f000" stroke="#a8f000" stroke-width="0.3" />
<polygon points="523.5,324.6 525.5,324.6 524.9,326.7 522.9,326.7" fill="#ff0000" stroke="#ff0000" stroke-width="0.3" />
<polygon points="525.5,324.6 527.4,324.6 526.8,326.7 524.9,326.7" fill="#ff6000" stroke="#ff6000" stroke-width="0.3" />
<polygon points="527.4,324.6 529.4,324.6 528.8,326.7 526.8,326.7" fill="#ff6000" stroke="#ff6000" stroke-width="0.3" />
<polygon points="529.4,324.6 531.3,324.6 530.7,326.7 528.8,326.7" fill="#f8f000" stroke="#f8f000" stroke-width="0.3" />
<polygon points="531.3,324.6 533.3,324.6 532.6,326.7 530.7,326.7" fill="#a8f000" stroke="#a8f000" stroke-width="0.3" />
<polygon points="522.9,326.7 524.9,326.7 524.2,328.8 522.3,328.8" fill="#ff0000" stroke="#ff0000" stroke-width="0.3" />
<polygon points="524.9,326.7 526.8,326.7 526.2,328.8 524.2,328.8" fill="#ff6000" stroke="#ff6000" stroke-width="0.3" />
<polygon points="526.8,326.7 528.8,326.7 528.1,328.8 526.2,328.8" fill="#ff6000" stroke="#ff6000" stroke-width="0.3" />
<polygon points="528.8,326.7 530.7,326.7 530.1,328.8 528.1,328.8" fill="#f8f000" stroke="#f8f000" stroke-width="0.3" />
<polygon points="530.7,326.7 532.6,326.7 532.0,328.8 530.1,328.8" fill="#a8f000" stroke="#a8f000" stroke-width="0.3" />
<polygon points="522.3,328.8 524.2,328.8 523.6,330.9 521.7,330.9" fill="#ff0000" stroke="#ff0000" stroke-width="0.3" />
<polygon points="524.2,328.8 526.2,328.8 525.6,330.9 523.6,330.9" fill="#ff6000" stroke="#ff6000" stroke-width="0.3" />
<polygon points="526.2,328.8 528.1,328.8 527.5,330.9 525.6,330.9" fill="#ff6000" stroke="#ff6000" stroke-width="0.3" />
<polygon points="528.1,328.8 530.1,328.8 529.5,330.9 527.5,330.9" fill="#f8f000" stroke="#f8f000" stroke-width="0.3" />
<polygon points="530.1,328.8 532.0,328.8 531.4,330.9 529.5,330.9" fill="#a8f000" stroke="#a8f000" stroke-width="0.3" />
<polygon points="521.7,330.9 523.6,330.9 523.0,332.9 521.0,332.9" fill="#ff0000" stroke="#ff0000" stroke-width="0.3" />
<polygon points="523.6,330.9 525.6,330.9 524.9,332.9 523.0,332.9" fill="#ff6000" stroke="#ff6000" stroke-width="0.3" />
<polygon points="525.6,330.9 527.5,330.9 526.9,332.9 524.9,332.9" fill="#ff6000" stroke="#ff6000" stroke-width="0.3" />
<polygon points="527.5,330.9 529.5,330.9 528.9,332.9 526.9,332.9" fill="#f8f000" stroke="#f8f000" stroke-width="0.3" />
<polygon points="529.5,330.9 531.4,330.9 530.8,332.9 528.9,332.9" fill="#a8f000" stroke="#a8f000" stroke-width="0.3" />
<polygon points="521.0,332.9 523.0,332.9 522.4,335.0 520.4,335.0" fill="#ff0000" stroke="#ff0000" stroke-width="0.3" />
<polygon points="523.0,332.9 524.9,332.9 524.3,335.0 522.4,335.0" fill="#ff6000" stroke="#ff6000" stroke-width="0.3" />
<polygon points="524.9,332.9 526.9,332.9 526.3,335.0 524.3,335.0" fill="#ff6000" stroke="#ff6000" stroke-width="0.3" />
<polygon points="526.9,332.9 528.9,332.9 528.2,335.0 526.3,335.0" fill="#f8f000" stroke="#f8f000" stroke-width="0.3" />
<polygon points="528.9,332.9 530.8,332.9 530.2,335.0 528.2,335.0" fill="#a8f000" stroke="#a8f000" stroke-width="0.3" />
<polygon points="520.4,335.0 522.4,335.0 521.7,337.1 519.8,337.1" fill="#ff0000" stroke="#ff0000" stroke-width="0.3" />
<polygon points="522.4,335.0 524.3,335.0 523.7,337.1 521.7,337.1" fill="#ff6000" stroke="#ff6000" stroke-width="0.3" />
<polygon points="524.3,335.0 526.3,335.0 525.7,337.1 523.7,337.1" fill="#ff6000" stroke="#ff6000" stroke-width="0.3" />
<polygon points="526.3,335.0 528.2,335.0 527.6,337.1 525.7,337.1" fill="#f8f000" stroke="#f8f000" stroke-width="0.3" />
<polygon points="528.2,335.0 530.2,335.0 529.6,337.1 527.6,337.1" fill="#a8f000" stroke="#a8f000" stroke-width="0.3" />
<polygon points="519.8,337.1 521.7,337.1 521.1,339.2 519.1,339.2" fill="#ff6000" stroke="#ff6000" stroke-width="0.3" />
<polygon points="521.7,337.1 523.7,337.1 523.1,339.2 521.1,339.2" fill="#ff6000" stroke="#ff6000" stroke-width="0.3" />
<polygon points="523.7,337.1 525.7,337.1 525.1,339.2 523.1,339.2" fill="#f8f000" stroke="#f8f000" stroke-width="0.3" />
<polygon points="525.7,337.1 527.6,337.1 527.0,339.2 525.1,339.2" fill="#f8f000" stroke="#f8f000" stroke-width="0.3" />
<polygon points="527.6,337.1 529.6,337.1 529.0,339.2 527.0,339.2" fill="#a8f000" stroke="#a8f000" stroke-width="0.3" />
<polygon points="519.1,339.2 521.1,339.2 520.5,341.2 518.5,341.2" fill="#ff6000" stroke="#ff6000" stroke-width="0.3" />
<polygon points="521.1,339.2 523.1,339.2 522.5,341.2 520.5,341.2" fill="#ff6000" stroke="#ff6000" stroke-width="0.3" />
<polygon points="523.1,339.2 525.1,339.2 524.4,341.2 522.5,341.2" fill="#f8f000" stroke="#f8f000" stroke-width="0.3" />
<polygon points="525.1,339.2 527.0,339.2 526.4,341.2 524.4,341.2" fill="#f8f000" stroke="#f8f000" stroke-width="0.3" />
<polygon points="527.0,339.2 529.0,339.2 528.4,341.2 526.4,341.2" fill="#a8f000" stroke="#a8f000" stroke-width="0.3" />
<polygon points="518.5,341.2 520.5,341.2 519.9,343.3 517.9,343.3" fill="#ff6000" stroke="#ff6000" stroke-width="0.3" />
<polygon points="520.5,341.2 522.5,341.2 521.8,343.3 519.9,343.3" fill="#f8f000" stroke="#f8f000" stroke-width="0.3" />
<polygon points="522.5,341.2 524.4,341.2 523.8,343.3 521.8,343.3" fill="#f8f000" stroke="#f8f000" stroke-width="0.3" />
<polygon points="524.4,341.2 526.4,341.2 525.8,343.3 523.8,343.3" fill="#f8f000" stroke="#f8f000" stroke-width="0.3" />
<polygon points="526.4,341.2 528.4,341.2 527.8,343.3 525.8,343.3" fill="#a8f000" stroke="#a8f000" stroke-width="0.3" />
<polygon points="517.9,343.3 519.9,343.3 519.2,345.4 517.2,345.4" fill="#f8f000" stroke="#f8f000" stroke-width="0.3" />
<polygon points="519.9,343.3 521.8,343.3 521.2,345.4 519.2,345.4" fill="#f8f000" stroke="#f8f000" stroke-width="0.3" />
<polygon points="521.8,343.3 523.8,343.3 523.2,345.4 521.2,345.4" fill="#f8f000" stroke="#f8f000" stroke-width="0.3" />
<polygon points="523.8,343.3 525.8,343.3 525.2,345.4 523.2,345.4" fill="#a8f000" stroke="#a8f000" stroke-width="0.3" />
<polygon points="525.8,343.3 527.8,343.3 527.2,345.4 525.2,345.4" fill="#a8f000" stroke="#a8f000" stroke-width="0.3" />
<polygon points="517.2,345.4 519.2,345.4 518.6,347.5 516.6,347.5" fill="#f8f000" stroke="#f8f000" stroke-width="0.3" />
<polygon points="519.2,345.4 521.2,345.4 520.6,347.5 518.6,347.5" fill="#f8f000" stroke="#f8f000" stroke-width="0.3" />
<polygon points="521.2,345.4 523.2,345.4 522.6,347.5 520.6,347.5" fill="#f8f000" stroke="#f8f000" stroke-width="0.3" />
<polygon points="523.2,345.4 525.2,345.4 524.6,347.5 522.6,347.5" fill="#a8f000" stroke="#a8f000" stroke-width="0.3" />
<polygon points="525.2,345.4 527.2,345.4 526.6,347.5 524.6,347.5" fill="#a8f000" stroke="#a8f000" stroke-width="0.3" />
<polygon points="516.6,347.5 518.6,347.5 518.0,349.6 516.0,349.6" fill="#f8f000" stroke="#f8f000" stroke-width="0.3" />
<polygon points="518.6,347.5 520.6,347.5 520.0,349.6 518.0,349.6" fill="#f8f000" stroke="#f8f000" stroke-width="0.3" />
<polygon points="520.6,347.5 522.6,347.5 522.0,349.6 520.0,349.6" fill="#a8f000" stroke="#a8f000" stroke-width="0.3" />
<polygon points="522.6,347.5 524.6,347.5 524.0,349.6 522.0,349.6" fill="#a8f000" stroke="#a8f000" stroke-width="0.3" />
<polygon points="524.6,347.5 526.6,347.5 526.0,349.6 524.0,349.6" fill="#20d820" stroke="#20d820" stroke-width="0.3" />
<polygon points="516.0,349.6 518.0,349.6 517.3,351.6 515.3,351.6" fill="#a8f000" stroke="#a8f000" stroke-width="0.3" />
<polygon points="518.0,349.6 520.0,349.6 519.3,351.6 517.3,351.6" fill="#a8f000" stroke="#a8f000" stroke-width="0.3" />
<polygon points="520.0,349.6 522.0,349.6 521.3,351.6 519.3,351.6" fill="#a8f000" stroke="#a8f000" stroke-width="0.3" />
<polygon points="522.0,349.6 524.0,349.6 523.3,351.6 521.3,351.6" fill="#a8f000" stroke="#a8f000" stroke-width="0.3" />
<polygon points="524.0,349.6 526.0,349.6 525.3,351.6 523.3,351.6" fill="#20d820" stroke="#20d820" stroke-width="0.3" />
<polygon points="515.3,351.6 517.3,351.6 516.7,353.7 514.7,353.7" fill="#a8f000" stroke="#a8f000" stroke-width="0.3" />
<polygon points="517.3,351.6 519.3,351.6 518.7,353.7 516.7,353.7" fill="#a8f000" stroke="#a8f000" stroke-width="0.3" />
<polygon points="519.3,351.6 521.3,351.6 520.7,353.7 518.7,353.7" fill="#a8f000" stroke="#a8f000" stroke-width="0.3" />
<polygon points="521.3,351.6 523.3,351.6 522.7,353.7 520.7,353.7" fill="#20d820" stroke="#20d820" stroke-width="0.3" />
<polygon points="523.3,351.6 525.3,351.6 524.7,353.7 522.7,353.7" fill="#20d820" stroke="#20d820" stroke-width="0.3" />
<polygon points="514.7,353.7 516.7,353.7 516.1,355.8 514.1,355.8" fill="#a8f000" stroke="#a8f000" stroke-width="0.3" />
<polygon points="516.7,353.7 518.7,353.7 518.1,355.8 516.1,355.8" fill="#a8f000" stroke="#a8f000" stroke-width="0.3" />
<polygon points="518.7,353.7 520.7,353.7 520.1,355.8 518.1,355.8" fill="#20d820" stroke="#20d820" stroke-width="0.3" />
<polygon points="520.7,353.7 522.7,353.7 522.1,355.8 520.1,355.8" fill="#20d820" stroke="#20d820" stroke-width="0.3" />
<polygon points="522.7,353.7 524.7,353.7 524.1,355.8 522.1,355.8" fill="#20d820" stroke="#20d820" stroke-width="0.3" />
<polygon points="514.1,355.8 516.1,355.8 515.5,357.9 513.5,357.9" fill="#a8f000" stroke="#a8f000" stroke-width="0.3" />
<polygon points="516.1,355.8 518.1,355.8 517.5,357.9 515.5,357.9" fill="#20d820" stroke="#20d820" stroke-width="0.3" />
<polygon points="518.1,355.8 520.1,355.8 519.5,357.9 517.5,357.9" fill="#20d820" stroke="#20d820" stroke-width="0.3" />
<polygon points="520.1,355.8 522.1,355.8 521.5,357.9 519.5,357.9" fill="#20d820" stroke="#20d820" stroke-width="0.3" />
<polygon points="522.1,355.8 524.1,355.8 523.5,357.9 521.5,357.9" fill="#20d820" stroke="#20d820" stroke-width="0.3" />
<polygon points="513.5,357.9 515.5,357.9 514.8,359.9 512.8,359.9" fill="#20d820" stroke="#20d820" stroke-width="0.3" />
<polygon points="515.5,357.9 517.5,357.9 516.9,359.9 514.8,359.9" fill="#20d820" stroke="#20d820" stroke-width="0.3" />
<polygon points="517.5,357.9 519.5,357.9 518.9,359.9 516.9,359.9" fill="#20d820" stroke="#20d820" stroke-width="0.3" />
<polygon points="519.5,357.9 521.5,357.9 520.9,359.9 518.9,359.9" fill="#20d820" stroke="#20d820" stroke-width="0.3" />
<polygon points="521.5,357.9 523.5,357.9 522.9,359.9 520.9,359.9" fill="#70e080" stroke="#70e080" stroke-width="0.3" />
<polygon points="512.8,359.9 514.8,359.9 514.2,362.0 512.2,362.0" fill="#20d820" stroke="#20d820" stroke-width="0.3" />
<polygon points="514.8,359.9 516.9,359.9 516.2,362.0 514.2,362.0" fill="#20d820" stroke="#20d820" stroke-width="0.3" />
<polygon points="516.9,359.9 518.9,359.9 518.3,362.0 516.2,362.0" fill="#20d820" stroke="#20d820" stroke-width="0.3" />
<polygon points="518.9,359.9 520.9,359.9 520.3,362.0 518.3,362.0" fill="#70e080" stroke="#70e080" stroke-width="0.3" />
<polygon points="520.9,359.9 522.9,359.9 522.3,362.0 520.3,362.0" fill="#70e080" stroke="#70e080" stroke-width="0.3" />
<polygon points="424.0,239.4 545.0,239.4 508.6,361.0 388.0,361.0" fill="#302f70" stroke="#1a1940" stroke-width="0.8" />
<polygon points="388.0,361.0 508.6,361.0 510.5,366.0 390.0,366.0" fill="#2a295e" stroke="#1a1940" stroke-width="0.6" />
<polygon points="545.0,239.4 549.0,241.0 512.5,362.0 508.6,361.0" fill="#25244e" stroke="#1a1940" stroke-width="0.6" />
<g stroke="#56207c" stroke-width="0.95" fill="none">
<path d="M466 318 H483 V333 H466 Z M472 310 H489 V325 H472 Z M466 318 L472 310 M483 318 L489 310 M483 333 L489 325 M466 333 L472 325"/>
<path d="M468 301 L478 321 L503 320 M478 321 L472 340"/>
</g>
<path d="M475.5 321 L477 324 L476 334" stroke="#40d0e8" stroke-width="1" fill="none"/><circle cx="475.5" cy="321" r="1.1" fill="#a0f040"/><circle cx="476" cy="334" r="1.1" fill="#40d0e8"/><path d="M478 326.5 H488" stroke="#e03040" stroke-width="1"/>
<text x="467" y="300" text-anchor="middle" font-family="Liberation Sans" font-weight="bold" font-size="7.8" fill="#56207c">Y</text>
<text x="507.5" y="321.8" text-anchor="middle" font-family="Liberation Sans" font-weight="bold" font-size="7.8" fill="#56207c">X</text>
<text x="469.5" y="347.5" text-anchor="middle" font-family="Liberation Sans" font-weight="bold" font-size="7.8" fill="#56207c">Z</text><g stroke="#c4c4ca" stroke-width="0.8" fill="none">
<polygon points="718.2,222.4 909.0,222.4 859.5,385.0 667.2,385.0"/>
<polygon points="667.2,385.0 859.5,385.0 875.2,417.0 682.9,417.0"/>
<polygon points="909.0,222.4 924.7,254.4 875.2,417.0 859.5,385.0"/>
<polygon points="745.5,239.4 866.5,239.4 830.1,361.0 709.5,361.0"/>
<polygon points="733.9,247.0 746.0,247.0 710.5,361.0 699.5,361.0"/>
<polygon points="868.3,247.0 877.6,247.0 844.1,362.0 834.0,362.0"/>
<polygon points="709.5,361.0 830.1,361.0 832.0,366.0 711.5,366.0"/>
<ellipse cx="812" cy="337" rx="38" ry="27"/><ellipse cx="806" cy="350" rx="50" ry="34"/>
<path d="M718.2 222.4 L734 254 M909 222.4 L925 254 M746 243 H866 M735 253 H877 M700 370 H834 M690 383 H860"/>
</g>
<g fill="none" stroke-linecap="butt">
<path d="M852.0 337.0 L865.0 337.0" stroke="#f08040" stroke-width="0.9"/>
<path d="M863.0 338.0 L865.0 337.0 L863.0 336.0" stroke="#f08040" stroke-width="0.7"/>
<path d="M854.0 338.0 L852.0 337.0 L854.0 336.0" stroke="#f08040" stroke-width="0.7"/>
<path d="M851.6 341.0 L864.4 343.5" stroke="#d83838" stroke-width="0.9"/>
<path d="M862.2 344.1 L864.4 343.5 L862.6 342.1" stroke="#d83838" stroke-width="0.7"/>
<path d="M853.4 342.4 L851.6 341.0 L853.8 340.4" stroke="#d83838" stroke-width="0.7"/>
<path d="M850.5 345.0 L862.5 349.8" stroke="#e04030" stroke-width="0.9"/>
<path d="M860.3 350.0 L862.5 349.8 L861.0 348.1" stroke="#e04030" stroke-width="0.7"/>
<path d="M851.9 346.7 L850.5 345.0 L852.7 344.8" stroke="#e04030" stroke-width="0.7"/>
<path d="M848.5 348.8 L859.6 355.6" stroke="#f08040" stroke-width="0.9"/>
<path d="M857.4 355.4 L859.6 355.6 L858.4 353.7" stroke="#f08040" stroke-width="0.7"/>
<path d="M849.7 350.7 L848.5 348.8 L850.8 349.0" stroke="#f08040" stroke-width="0.7"/>
<path d="M845.9 352.4 L855.8 360.9" stroke="#e04030" stroke-width="0.9"/>
<path d="M853.6 360.3 L855.8 360.9 L854.9 358.8" stroke="#e04030" stroke-width="0.7"/>
<path d="M846.8 354.4 L845.9 352.4 L848.1 352.9" stroke="#e04030" stroke-width="0.7"/>
<path d="M842.6 355.6 L851.1 365.5" stroke="#e04030" stroke-width="0.9"/>
<path d="M849.1 364.6 L851.1 365.5 L850.6 363.3" stroke="#e04030" stroke-width="0.7"/>
<path d="M843.2 357.8 L842.6 355.6 L844.7 356.5" stroke="#e04030" stroke-width="0.7"/>
<path d="M838.8 358.6 L845.9 369.4" stroke="#e86a30" stroke-width="0.9"/>
<path d="M843.9 368.3 L845.9 369.4 L845.6 367.2" stroke="#e86a30" stroke-width="0.7"/>
<path d="M839.0 360.8 L838.8 358.6 L840.7 359.7" stroke="#e86a30" stroke-width="0.7"/>
<path d="M834.4 361.0 L840.1 372.7" stroke="#f08040" stroke-width="0.9"/>
<path d="M838.3 371.4 L840.1 372.7 L840.1 370.5" stroke="#f08040" stroke-width="0.7"/>
<path d="M834.3 363.3 L834.4 361.0 L836.1 362.4" stroke="#f08040" stroke-width="0.7"/>
<path d="M829.5 363.1 L833.9 375.3" stroke="#f08040" stroke-width="0.9"/>
<path d="M832.3 373.8 L833.9 375.3 L834.1 373.1" stroke="#f08040" stroke-width="0.7"/>
<path d="M829.3 365.3 L829.5 363.1 L831.1 364.6" stroke="#f08040" stroke-width="0.7"/>
<path d="M824.4 364.6 L826.9 375.3" stroke="#4848c0" stroke-width="0.9"/>
<path d="M825.5 373.6 L826.9 375.3 L827.4 373.1" stroke="#4848c0" stroke-width="0.7"/>
<path d="M823.8 366.8 L824.4 364.6 L825.8 366.3" stroke="#4848c0" stroke-width="0.7"/>
<path d="M818.9 365.6 L820.3 376.5" stroke="#4848c0" stroke-width="0.9"/>
<path d="M819.1 374.6 L820.3 376.5 L821.1 374.4" stroke="#4848c0" stroke-width="0.7"/>
<path d="M818.2 367.7 L818.9 365.6 L820.2 367.4" stroke="#4848c0" stroke-width="0.7"/>
<path d="M813.4 366.0 L813.7 377.0" stroke="#f08a40" stroke-width="0.9"/>
<path d="M812.6 375.0 L813.7 377.0 L814.6 375.0" stroke="#f08a40" stroke-width="0.7"/>
<path d="M812.4 368.0 L813.4 366.0 L814.4 368.0" stroke="#f08a40" stroke-width="0.7"/>
<path d="M807.8 365.8 L807.0 376.8" stroke="#5050c8" stroke-width="0.9"/>
<path d="M806.1 374.7 L807.0 376.8 L808.1 374.9" stroke="#5050c8" stroke-width="0.7"/>
<path d="M806.7 367.8 L807.8 365.8 L808.7 367.9" stroke="#5050c8" stroke-width="0.7"/>
<path d="M802.3 365.1 L800.4 376.0" stroke="#f08a40" stroke-width="0.9"/>
<path d="M799.7 373.8 L800.4 376.0 L801.7 374.2" stroke="#f08a40" stroke-width="0.7"/>
<path d="M801.0 366.9 L802.3 365.1 L803.0 367.3" stroke="#f08a40" stroke-width="0.7"/>
<path d="M797.0 363.9 L793.9 374.4" stroke="#4848c0" stroke-width="0.9"/>
<path d="M793.5 372.2 L793.9 374.4 L795.4 372.8" stroke="#4848c0" stroke-width="0.7"/>
<path d="M795.5 365.5 L797.0 363.9 L797.4 366.1" stroke="#4848c0" stroke-width="0.7"/>
<path d="M792.0 362.1 L787.8 372.3" stroke="#5050c8" stroke-width="0.9"/>
<path d="M787.6 370.0 L787.8 372.3 L789.4 370.8" stroke="#5050c8" stroke-width="0.7"/>
<path d="M790.3 363.6 L792.0 362.1 L792.2 364.3" stroke="#5050c8" stroke-width="0.7"/>
<path d="M787.4 359.9 L782.0 369.4" stroke="#e8a040" stroke-width="0.9"/>
<path d="M782.1 367.2 L782.0 369.4 L783.8 368.2" stroke="#e8a040" stroke-width="0.7"/>
<path d="M785.5 361.1 L787.4 359.9 L787.3 362.1" stroke="#e8a040" stroke-width="0.7"/>
<path d="M779.0 354.4 L774.8 358.6" stroke="#5a5ad0" stroke-width="0.9"/>
<path d="M775.5 356.5 L774.8 358.6 L776.9 357.9" stroke="#5a5ad0" stroke-width="0.7"/>
<path d="M776.9 355.1 L779.0 354.4 L778.3 356.5" stroke="#5a5ad0" stroke-width="0.7"/>
<path d="M773.7 347.1 L768.3 349.8" stroke="#4040b8" stroke-width="0.9"/>
<path d="M769.6 348.0 L768.3 349.8 L770.5 349.8" stroke="#4040b8" stroke-width="0.7"/>
<path d="M771.4 347.1 L773.7 347.1 L772.3 348.9" stroke="#4040b8" stroke-width="0.7"/>
<path d="M771.3 339.1 L765.3 339.6" stroke="#4040b8" stroke-width="0.9"/>
<path d="M767.2 338.5 L765.3 339.6 L767.4 340.4" stroke="#4040b8" stroke-width="0.7"/>
<path d="M769.2 338.3 L771.3 339.1 L769.4 340.3" stroke="#4040b8" stroke-width="0.7"/>
<path d="M772.1 330.8 L766.3 329.2" stroke="#4040b8" stroke-width="0.9"/>
<path d="M768.5 328.8 L766.3 329.2 L768.0 330.7" stroke="#4040b8" stroke-width="0.7"/>
<path d="M770.5 329.3 L772.1 330.8 L769.9 331.2" stroke="#4040b8" stroke-width="0.7"/>
<path d="M776.0 323.1 L771.1 319.6" stroke="#5a5ad0" stroke-width="0.9"/>
<path d="M773.3 319.9 L771.1 319.6 L772.2 321.6" stroke="#5a5ad0" stroke-width="0.7"/>
<path d="M775.0 321.1 L776.0 323.1 L773.8 322.7" stroke="#5a5ad0" stroke-width="0.7"/>
<path d="M782.7 316.5 L779.0 311.7" stroke="#4040b8" stroke-width="0.9"/>
<path d="M781.0 312.7 L779.0 311.7 L779.4 313.9" stroke="#4040b8" stroke-width="0.7"/>
<path d="M782.2 314.3 L782.7 316.5 L780.7 315.5" stroke="#4040b8" stroke-width="0.7"/>
<path d="M791.6 311.4 L789.3 305.8" stroke="#4040b8" stroke-width="0.9"/>
<path d="M791.0 307.3 L789.3 305.8 L789.1 308.1" stroke="#4040b8" stroke-width="0.7"/>
<path d="M791.8 309.2 L791.6 311.4 L789.9 309.9" stroke="#4040b8" stroke-width="0.7"/>
<path d="M802.1 308.3 L800.9 301.4" stroke="#4040b8" stroke-width="0.9"/>
<path d="M802.2 303.2 L800.9 301.4 L800.3 303.6" stroke="#4040b8" stroke-width="0.7"/>
<path d="M802.8 306.2 L802.1 308.3 L800.8 306.5" stroke="#4040b8" stroke-width="0.7"/>
<path d="M813.4 307.4 L813.6 300.4" stroke="#a0d040" stroke-width="0.9"/>
<path d="M814.6 302.5 L813.6 300.4 L812.6 302.4" stroke="#a0d040" stroke-width="0.7"/>
<path d="M814.5 305.5 L813.4 307.4 L812.5 305.4" stroke="#a0d040" stroke-width="0.7"/>
<path d="M824.6 308.9 L826.2 302.1" stroke="#4040b8" stroke-width="0.9"/>
<path d="M826.7 304.2 L826.2 302.1 L824.8 303.8" stroke="#4040b8" stroke-width="0.7"/>
<path d="M826.0 307.2 L824.6 308.9 L824.1 306.7" stroke="#4040b8" stroke-width="0.7"/>
<path d="M834.4 313.0 L840.1 301.3" stroke="#e04030" stroke-width="0.9"/>
<path d="M840.1 303.5 L840.1 301.3 L838.3 302.6" stroke="#e04030" stroke-width="0.7"/>
<path d="M836.1 311.6 L834.4 313.0 L834.3 310.7" stroke="#e04030" stroke-width="0.7"/>
<path d="M838.8 315.4 L845.9 304.6" stroke="#e04030" stroke-width="0.9"/>
<path d="M845.6 306.8 L845.9 304.6 L843.9 305.7" stroke="#e04030" stroke-width="0.7"/>
<path d="M840.7 314.3 L838.8 315.4 L839.0 313.2" stroke="#e04030" stroke-width="0.7"/>
<path d="M842.6 318.4 L851.1 308.5" stroke="#f08040" stroke-width="0.9"/>
<path d="M850.6 310.7 L851.1 308.5 L849.1 309.4" stroke="#f08040" stroke-width="0.7"/>
<path d="M844.7 317.5 L842.6 318.4 L843.2 316.2" stroke="#f08040" stroke-width="0.7"/>
<path d="M845.9 321.6 L855.8 313.1" stroke="#e86a30" stroke-width="0.9"/>
<path d="M854.9 315.2 L855.8 313.1 L853.6 313.7" stroke="#e86a30" stroke-width="0.7"/>
<path d="M848.1 321.1 L845.9 321.6 L846.8 319.6" stroke="#e86a30" stroke-width="0.7"/>
<path d="M848.5 325.2 L859.6 318.4" stroke="#f08040" stroke-width="0.9"/>
<path d="M858.4 320.3 L859.6 318.4 L857.4 318.6" stroke="#f08040" stroke-width="0.7"/>
<path d="M850.8 325.0 L848.5 325.2 L849.7 323.3" stroke="#f08040" stroke-width="0.7"/>
<path d="M850.5 329.0 L862.5 324.2" stroke="#e04030" stroke-width="0.9"/>
<path d="M861.0 325.9 L862.5 324.2 L860.3 324.0" stroke="#e04030" stroke-width="0.7"/>
<path d="M852.7 329.2 L850.5 329.0 L851.9 327.3" stroke="#e04030" stroke-width="0.7"/>
<path d="M851.6 333.0 L864.4 330.5" stroke="#e86a30" stroke-width="0.9"/>
<path d="M862.6 331.9 L864.4 330.5 L862.2 329.9" stroke="#e86a30" stroke-width="0.7"/>
<path d="M853.8 333.6 L851.6 333.0 L853.4 331.6" stroke="#e86a30" stroke-width="0.7"/>
<path d="M856.8 306.0 L867.7 291.6" stroke="#e84040" stroke-width="1.0"/>
<path d="M867.3 293.8 L867.7 291.6 L865.7 292.6" stroke="#e84040" stroke-width="0.7"/>
<path d="M858.8 305.0 L856.8 306.0 L857.3 303.8" stroke="#e84040" stroke-width="0.7"/>
<path d="M861.7 310.2 L874.3 297.3" stroke="#e03030" stroke-width="1.0"/>
<path d="M873.6 299.4 L874.3 297.3 L872.2 298.0" stroke="#e03030" stroke-width="0.7"/>
<path d="M863.8 309.4 L861.7 310.2 L862.4 308.0" stroke="#e03030" stroke-width="0.7"/>
<path d="M869.5 320.2 L885.3 311.5" stroke="#e84040" stroke-width="1.0"/>
<path d="M884.0 313.3 L885.3 311.5 L883.0 311.6" stroke="#e84040" stroke-width="0.7"/>
<path d="M871.8 320.1 L869.5 320.2 L870.8 318.4" stroke="#e84040" stroke-width="0.7"/>
<path d="M873.0 328.8 L890.4 324.3" stroke="#e03030" stroke-width="1.0"/>
<path d="M888.7 325.8 L890.4 324.3 L888.2 323.8" stroke="#e03030" stroke-width="0.7"/>
<path d="M875.1 329.3 L873.0 328.8 L874.6 327.3" stroke="#e03030" stroke-width="0.7"/>
<path d="M874.0 338.5 L891.9 339.4" stroke="#e84040" stroke-width="1.0"/>
<path d="M889.9 340.3 L891.9 339.4 L890.0 338.3" stroke="#e84040" stroke-width="0.7"/>
<path d="M875.9 339.6 L874.0 338.5 L876.0 337.6" stroke="#e84040" stroke-width="0.7"/>
<path d="M873.4 343.0 L891.1 346.4" stroke="#e03030" stroke-width="1.0"/>
<path d="M889.0 347.0 L891.1 346.4 L889.3 345.0" stroke="#e03030" stroke-width="0.7"/>
<path d="M875.2 344.4 L873.4 343.0 L875.6 342.4" stroke="#e03030" stroke-width="0.7"/>
<path d="M870.1 352.7 L886.1 360.9" stroke="#e84040" stroke-width="1.0"/>
<path d="M883.9 360.9 L886.1 360.9 L884.8 359.1" stroke="#e84040" stroke-width="0.7"/>
<path d="M871.4 354.5 L870.1 352.7 L872.3 352.7" stroke="#e84040" stroke-width="0.7"/>
<path d="M865.7 359.5 L879.8 370.7" stroke="#e03030" stroke-width="1.0"/>
<path d="M877.6 370.2 L879.8 370.7 L878.9 368.6" stroke="#e03030" stroke-width="0.7"/>
<path d="M866.7 361.5 L865.7 359.5 L867.9 359.9" stroke="#e03030" stroke-width="0.7"/>
<path d="M859.3 366.0 L871.0 379.7" stroke="#e84040" stroke-width="1.0"/>
<path d="M869.0 378.9 L871.0 379.7 L870.5 377.6" stroke="#e84040" stroke-width="0.7"/>
<path d="M859.9 368.2 L859.3 366.0 L861.4 366.9" stroke="#e84040" stroke-width="0.7"/>
<path d="M799.0 296.0 L796.9 283.2" stroke="#e04030" stroke-width="0.9"/>
<path d="M798.2 285.0 L796.9 283.2 L796.2 285.3" stroke="#e04030" stroke-width="0.7"/>
<path d="M799.7 293.9 L799.0 296.0 L797.7 294.2" stroke="#e04030" stroke-width="0.7"/>
<path d="M806.5 295.1 L805.6 282.2" stroke="#f0a040" stroke-width="0.9"/>
<path d="M806.7 284.1 L805.6 282.2 L804.7 284.2" stroke="#f0a040" stroke-width="0.7"/>
<path d="M807.3 293.1 L806.5 295.1 L805.3 293.2" stroke="#f0a040" stroke-width="0.7"/>
<path d="M812.5 295.0 L812.6 282.0" stroke="#f0a040" stroke-width="0.9"/>
<path d="M813.6 284.0 L812.6 282.0 L811.6 283.9" stroke="#f0a040" stroke-width="0.7"/>
<path d="M813.5 293.0 L812.5 295.0 L811.5 292.9" stroke="#f0a040" stroke-width="0.7"/>
<path d="M821.7 295.5 L823.3 282.6" stroke="#e04030" stroke-width="0.9"/>
<path d="M824.1 284.8 L823.3 282.6 L822.1 284.5" stroke="#e04030" stroke-width="0.7"/>
<path d="M823.0 293.7 L821.7 295.5 L821.0 293.4" stroke="#e04030" stroke-width="0.7"/>
<path d="M832.0 297.5 L835.4 285.0" stroke="#f0a040" stroke-width="0.9"/>
<path d="M835.8 287.2 L835.4 285.0 L833.9 286.6" stroke="#f0a040" stroke-width="0.7"/>
<path d="M833.5 295.9 L832.0 297.5 L831.6 295.3" stroke="#f0a040" stroke-width="0.7"/>
<path d="M807.2 381.8 L806.6 393.8" stroke="#e0d040" stroke-width="0.9"/>
<path d="M805.7 391.7 L806.6 393.8 L807.7 391.9" stroke="#e0d040" stroke-width="0.7"/>
<path d="M806.1 383.8 L807.2 381.8 L808.1 383.9" stroke="#e0d040" stroke-width="0.7"/>
<path d="M797.8 380.7 L795.7 392.6" stroke="#e03030" stroke-width="0.9"/>
<path d="M795.1 390.4 L795.7 392.6 L797.1 390.8" stroke="#e03030" stroke-width="0.7"/>
<path d="M796.4 382.6 L797.8 380.7 L798.4 382.9" stroke="#e03030" stroke-width="0.7"/>
<path d="M790.8 379.2 L787.7 390.8" stroke="#f0e050" stroke-width="0.9"/>
<path d="M787.3 388.7 L787.7 390.8 L789.2 389.2" stroke="#f0e050" stroke-width="0.7"/>
<path d="M789.3 380.9 L790.8 379.2 L791.2 381.4" stroke="#f0e050" stroke-width="0.7"/>
<path d="M780.7 375.8 L776.1 386.9" stroke="#e03030" stroke-width="0.9"/>
<path d="M775.9 384.6 L776.1 386.9 L777.8 385.4" stroke="#e03030" stroke-width="0.7"/>
<path d="M779.0 377.3 L780.7 375.8 L780.9 378.0" stroke="#e03030" stroke-width="0.7"/>
<path d="M772.5 371.6 L766.3 381.9" stroke="#e06030" stroke-width="0.9"/>
<path d="M766.5 379.7 L766.3 381.9 L768.2 380.7" stroke="#e06030" stroke-width="0.7"/>
<path d="M770.6 372.8 L772.5 371.6 L772.3 373.9" stroke="#e06030" stroke-width="0.7"/>
<path d="M765.3 366.6 L757.7 375.8" stroke="#e03030" stroke-width="0.9"/>
<path d="M758.2 373.6 L757.7 375.8 L759.7 374.9" stroke="#e03030" stroke-width="0.7"/>
<path d="M763.3 367.5 L765.3 366.6 L764.8 368.8" stroke="#e03030" stroke-width="0.7"/>
<path d="M760.2 361.7 L751.3 369.8" stroke="#f0e050" stroke-width="0.9"/>
<path d="M752.2 367.7 L751.3 369.8 L753.5 369.2" stroke="#f0e050" stroke-width="0.7"/>
<path d="M758.1 362.3 L760.2 361.7 L759.4 363.8" stroke="#f0e050" stroke-width="0.7"/>
<path d="M835.0 303.2 L837.0 297.5" stroke="#e0d040" stroke-width="0.8"/>
<path d="M837.2 299.7 L837.0 297.5 L835.4 299.1" stroke="#e0d040" stroke-width="0.7"/>
<path d="M836.6 301.6 L835.0 303.2 L834.7 301.0" stroke="#e0d040" stroke-width="0.7"/>
<path d="M848.4 310.1 L851.9 305.2" stroke="#f0b040" stroke-width="0.8"/>
<path d="M851.6 307.4 L851.9 305.2 L849.9 306.3" stroke="#f0b040" stroke-width="0.7"/>
<path d="M850.4 309.0 L848.4 310.1 L848.8 307.9" stroke="#f0b040" stroke-width="0.7"/>
<path d="M853.4 314.2 L857.5 309.8" stroke="#a8d840" stroke-width="0.8"/>
<path d="M856.9 312.0 L857.5 309.8 L855.4 310.6" stroke="#a8d840" stroke-width="0.7"/>
<path d="M855.5 313.4 L853.4 314.2 L854.1 312.1" stroke="#a8d840" stroke-width="0.7"/>
<path d="M859.7 322.0 L864.8 318.9" stroke="#e0d040" stroke-width="0.8"/>
<path d="M863.6 320.8 L864.8 318.9 L862.6 319.1" stroke="#e0d040" stroke-width="0.7"/>
<path d="M861.9 321.8 L859.7 322.0 L860.9 320.1" stroke="#e0d040" stroke-width="0.7"/>
<path d="M862.7 328.8 L868.5 327.0" stroke="#e0d040" stroke-width="0.8"/>
<path d="M866.9 328.6 L868.5 327.0 L866.3 326.6" stroke="#e0d040" stroke-width="0.7"/>
<path d="M865.0 329.1 L862.7 328.8 L864.4 327.2" stroke="#e0d040" stroke-width="0.7"/>
<path d="M863.9 334.9 L869.9 334.4" stroke="#e0d040" stroke-width="0.8"/>
<path d="M868.0 335.6 L869.9 334.4 L867.8 333.6" stroke="#e0d040" stroke-width="0.7"/>
<path d="M866.0 335.7 L863.9 334.9 L865.8 333.7" stroke="#e0d040" stroke-width="0.7"/>
<path d="M862.8 344.9 L868.6 346.6" stroke="#a8d840" stroke-width="0.8"/>
<path d="M866.4 347.0 L868.6 346.6 L867.0 345.1" stroke="#a8d840" stroke-width="0.7"/>
<path d="M864.5 346.4 L862.8 344.9 L865.0 344.5" stroke="#a8d840" stroke-width="0.7"/>
<path d="M859.9 351.7 L865.1 354.7" stroke="#f0b040" stroke-width="0.8"/>
<path d="M862.8 354.6 L865.1 354.7 L863.8 352.9" stroke="#f0b040" stroke-width="0.7"/>
<path d="M861.1 353.6 L859.9 351.7 L862.1 351.8" stroke="#f0b040" stroke-width="0.7"/>
<path d="M854.9 358.3 L859.3 362.4" stroke="#f0b040" stroke-width="0.8"/>
<path d="M857.2 361.7 L859.3 362.4 L858.5 360.3" stroke="#f0b040" stroke-width="0.7"/>
<path d="M855.7 360.4 L854.9 358.3 L857.1 358.9" stroke="#f0b040" stroke-width="0.7"/>
<path d="M844.9 366.2 L848.0 371.4" stroke="#f0b040" stroke-width="0.8"/>
<path d="M846.1 370.1 L848.0 371.4 L847.8 369.1" stroke="#f0b040" stroke-width="0.7"/>
<path d="M845.1 368.4 L844.9 366.2 L846.8 367.4" stroke="#f0b040" stroke-width="0.7"/>
<path d="M840.9 368.3 L843.5 373.7" stroke="#a8d840" stroke-width="0.8"/>
<path d="M841.7 372.4 L843.5 373.7 L843.5 371.5" stroke="#a8d840" stroke-width="0.7"/>
<path d="M840.9 370.6 L840.9 368.3 L842.7 369.7" stroke="#a8d840" stroke-width="0.7"/>
<path d="M829.7 372.4 L831.2 378.3" stroke="#e0d040" stroke-width="0.8"/>
<path d="M829.7 376.6 L831.2 378.3 L831.7 376.1" stroke="#e0d040" stroke-width="0.7"/>
<path d="M829.2 374.6 L829.7 372.4 L831.2 374.1" stroke="#e0d040" stroke-width="0.7"/>
<path d="M839.3 371.7 L843.7 373.8" stroke="#70c850" stroke-width="0.8"/>
<path d="M828.3 386.2 L833.4 390.5" stroke="#60c060" stroke-width="0.8"/>
<path d="M794.5 390.6 L795.2 394.7" stroke="#d8d840" stroke-width="0.8"/>
<path d="M728.9 314.8 L723.6 313.6" stroke="#a0d840" stroke-width="0.8"/>
<path d="M724.1 311.8 L720.2 308.7" stroke="#60c060" stroke-width="0.8"/>
<path d="M792.0 271.3 L790.8 267.1" stroke="#60c060" stroke-width="0.8"/>
<path d="M886.7 353.0 L892.8 356.4" stroke="#70c850" stroke-width="0.8"/>
<path d="M860.4 395.7 L865.1 397.9" stroke="#a8e8a0" stroke-width="0.8"/>
<path d="M734.3 351.5 L729.2 354.9" stroke="#90e060" stroke-width="0.8"/>
<path d="M758.4 312.4 L755.8 308.9" stroke="#a0d840" stroke-width="0.8"/>
<path d="M737.3 322.0 L730.6 319.6" stroke="#60c060" stroke-width="0.8"/>
<path d="M871.4 296.6 L873.4 292.4" stroke="#d8d840" stroke-width="0.8"/>
<path d="M846.3 366.1 L850.8 369.9" stroke="#90e060" stroke-width="0.8"/>
<path d="M779.7 308.5 L774.4 306.7" stroke="#60c060" stroke-width="0.8"/>
<path d="M745.4 350.0 L739.0 350.9" stroke="#c8e040" stroke-width="0.8"/>
<path d="M816.0 397.2 L815.5 402.8" stroke="#a0d840" stroke-width="0.8"/>
<path d="M768.4 356.3 L764.8 361.4" stroke="#70c850" stroke-width="0.8"/>
<path d="M854.1 354.9 L859.9 357.4" stroke="#60c060" stroke-width="0.8"/>
<path d="M765.0 395.2 L762.0 399.7" stroke="#a0d840" stroke-width="0.8"/>
<path d="M854.7 377.6 L856.3 381.6" stroke="#90e060" stroke-width="0.8"/>
<path d="M775.8 371.7 L773.8 377.8" stroke="#a8e8a0" stroke-width="0.8"/>
<path d="M851.8 358.6 L855.2 364.4" stroke="#a0d840" stroke-width="0.8"/>
<path d="M748.8 384.5 L744.4 387.3" stroke="#90e060" stroke-width="0.8"/>
<path d="M849.2 310.8 L852.5 306.3" stroke="#a0d840" stroke-width="0.8"/>
<path d="M834.8 387.8 L838.7 390.7" stroke="#60c060" stroke-width="0.8"/>
<path d="M827.8 302.2 L829.5 297.6" stroke="#d8d840" stroke-width="0.8"/>
<path d="M872.6 293.9 L875.7 289.9" stroke="#c8e040" stroke-width="0.8"/>
<path d="M866.7 363.8 L871.9 366.2" stroke="#70c850" stroke-width="0.8"/>
<path d="M720.3 308.9 L715.3 307.6" stroke="#90e060" stroke-width="0.8"/>
<path d="M788.4 388.2 L786.7 392.9" stroke="#60c060" stroke-width="0.8"/>
<path d="M786.8 368.7 L785.6 373.9" stroke="#a0d840" stroke-width="0.8"/>
<path d="M846.8 395.8 L846.7 402.1" stroke="#c8e040" stroke-width="0.8"/>
<path d="M892.4 322.4 L898.1 322.4" stroke="#c8e040" stroke-width="0.8"/>
<path d="M747.1 324.8 L741.5 322.7" stroke="#a0d840" stroke-width="0.8"/>
<path d="M825.8 401.3 L824.6 406.4" stroke="#a8e8a0" stroke-width="0.8"/>
<path d="M885.8 374.2 L888.6 378.1" stroke="#d8d840" stroke-width="0.8"/>
<path d="M790.1 372.0 L789.8 376.3" stroke="#d8d840" stroke-width="0.8"/>
<path d="M770.0 295.7 L766.8 292.2" stroke="#60c060" stroke-width="0.8"/>
<path d="M788.2 291.2 L783.3 286.4" stroke="#d8d840" stroke-width="0.8"/>
<path d="M725.5 309.9 L720.8 306.1" stroke="#a8e8a0" stroke-width="0.8"/>
<path d="M887.0 343.2 L892.8 345.1" stroke="#a8e8a0" stroke-width="0.8"/>
<path d="M864.6 332.6 L870.2 330.2" stroke="#d8d840" stroke-width="0.8"/>
<path d="M787.2 297.0 L782.1 293.0" stroke="#d8d840" stroke-width="0.8"/>
<path d="M808.9 300.2 L810.8 296.4" stroke="#d8d840" stroke-width="0.8"/>
<path d="M849.0 398.7 L849.9 403.8" stroke="#c8e040" stroke-width="0.8"/>
<path d="M763.4 393.3 L758.7 395.9" stroke="#70c850" stroke-width="0.8"/>
<path d="M836.1 398.0 L840.9 401.8" stroke="#90e060" stroke-width="0.8"/>
<path d="M770.3 377.0 L765.2 379.8" stroke="#d8d840" stroke-width="0.8"/>
<path d="M730.5 350.9 L722.9 351.9" stroke="#70c850" stroke-width="0.8"/>
<path d="M863.4 329.1 L868.6 327.0" stroke="#d8d840" stroke-width="0.8"/>
<path d="M736.0 347.7 L728.3 348.7" stroke="#a8e8a0" stroke-width="0.8"/>
<path d="M728.5 320.2 L721.5 321.5" stroke="#70c850" stroke-width="0.8"/>
<path d="M721.9 298.5 L718.2 294.9" stroke="#c8e040" stroke-width="0.8"/>
<path d="M855.1 371.7 L862.0 374.0" stroke="#a0d840" stroke-width="0.8"/>
<path d="M813.0 391.4 L815.5 395.3" stroke="#c8e040" stroke-width="0.8"/>
<path d="M862.2 382.4 L865.9 387.5" stroke="#70c850" stroke-width="0.8"/>
<path d="M873.0 313.4 L880.6 312.3" stroke="#a8e8a0" stroke-width="0.8"/>
<path d="M851.4 378.6 L856.5 381.4" stroke="#90e060" stroke-width="0.8"/>
<path d="M768.4 285.4 L768.0 280.2" stroke="#60c060" stroke-width="0.8"/>
<path d="M809.7 397.6 L810.3 401.6" stroke="#a8e8a0" stroke-width="0.8"/>
<path d="M828.0 371.0 L830.8 376.9" stroke="#60c060" stroke-width="0.8"/>
<path d="M890.3 380.0 L894.7 382.5" stroke="#70c850" stroke-width="0.8"/>
<path d="M790.0 377.7 L786.8 382.0" stroke="#70c850" stroke-width="0.8"/>
<path d="M765.4 384.7 L762.2 387.8" stroke="#70c850" stroke-width="0.8"/>
<path d="M809.7 293.7 L807.8 289.4" stroke="#a0d840" stroke-width="0.8"/>
<path d="M865.7 301.7 L871.3 298.2" stroke="#d8d840" stroke-width="0.8"/>
<path d="M891.2 366.6 L896.3 368.3" stroke="#c8e040" stroke-width="0.8"/>
<path d="M815.8 377.8 L814.0 382.4" stroke="#60c060" stroke-width="0.8"/>
<path d="M759.1 275.7 L757.0 270.8" stroke="#d8d840" stroke-width="0.8"/>
<path d="M764.0 358.8 L759.4 362.3" stroke="#60c060" stroke-width="0.8"/>
<path d="M722.6 322.5 L716.7 323.6" stroke="#a0d840" stroke-width="0.8"/>
<path d="M800.8 275.4 L798.5 270.6" stroke="#90e060" stroke-width="0.8"/>
<path d="M724.3 377.4 L721.5 381.1" stroke="#70c850" stroke-width="0.8"/>
<path d="M799.6 289.8 L795.6 285.9" stroke="#90e060" stroke-width="0.8"/>
<path d="M734.2 385.2 L726.4 386.7" stroke="#60c060" stroke-width="0.8"/>
<path d="M836.5 367.5 L838.4 372.5" stroke="#d8d840" stroke-width="0.8"/>
<path d="M772.0 318.3 L767.3 315.2" stroke="#90e060" stroke-width="0.8"/>
<path d="M726.6 327.4 L721.2 324.9" stroke="#70c850" stroke-width="0.8"/>
<path d="M839.5 379.6 L841.3 384.5" stroke="#d8d840" stroke-width="0.8"/>
<path d="M811.6 275.3 L814.6 270.7" stroke="#d8d840" stroke-width="0.8"/>
<path d="M844.1 308.8 L848.9 305.3" stroke="#60c060" stroke-width="0.8"/>
<path d="M873.2 363.7 L877.0 367.4" stroke="#a8e8a0" stroke-width="0.8"/>
<path d="M827.4 298.2 L830.5 292.4" stroke="#60c060" stroke-width="0.8"/>
<path d="M740.6 341.8 L734.4 339.9" stroke="#90e060" stroke-width="0.8"/>
<path d="M875.2 340.3 L882.7 341.2" stroke="#c8e040" stroke-width="0.8"/>
<path d="M754.8 316.9 L749.8 316.5" stroke="#60c060" stroke-width="0.8"/>
<path d="M864.6 296.5 L871.8 294.0" stroke="#90e060" stroke-width="0.8"/>
<path d="M877.7 337.7 L885.2 335.6" stroke="#70c850" stroke-width="0.8"/>
<path d="M791.5 291.9 L786.4 287.6" stroke="#90e060" stroke-width="0.8"/>
<path d="M869.9 316.3 L875.6 316.5" stroke="#a0d840" stroke-width="0.8"/>
<path d="M835.2 279.3 L836.7 274.7" stroke="#a8e8a0" stroke-width="0.8"/>
<path d="M819.0 383.8 L819.8 387.8" stroke="#90e060" stroke-width="0.8"/>
<path d="M872.9 298.6 L875.8 293.5" stroke="#a0d840" stroke-width="0.8"/>
<path d="M857.0 325.2 L863.4 324.9" stroke="#d8d840" stroke-width="0.8"/>
<path d="M859.2 398.3 L859.7 402.5" stroke="#d8d840" stroke-width="0.8"/>
<path d="M810.6 386.7 L812.7 392.1" stroke="#70c850" stroke-width="0.8"/>
<path d="M784.9 299.4 L782.2 294.9" stroke="#60c060" stroke-width="0.8"/>
<path d="M798.1 292.2 L796.5 288.2" stroke="#70c850" stroke-width="0.8"/>
<path d="M805.2 377.8 L806.3 381.7" stroke="#c8e040" stroke-width="0.8"/>
<path d="M767.0 313.1 L761.9 312.1" stroke="#90e060" stroke-width="0.8"/>
<path d="M759.4 302.7 L754.6 300.3" stroke="#a8e8a0" stroke-width="0.8"/>
<path d="M832.8 294.9 L836.6 291.9" stroke="#60c060" stroke-width="0.8"/>
<path d="M871.8 361.2 L875.7 365.8" stroke="#90e060" stroke-width="0.8"/>
<path d="M776.0 286.0 L775.9 280.5" stroke="#c8e040" stroke-width="0.8"/>
<path d="M808.2 396.0 L808.8 400.7" stroke="#70c850" stroke-width="0.8"/>
<path d="M835.4 395.2 L835.2 399.5" stroke="#90e060" stroke-width="0.8"/>
<path d="M817.3 377.6 L816.8 382.1" stroke="#a0d840" stroke-width="0.8"/>
<path d="M873.0 383.8 L878.8 386.9" stroke="#c8e040" stroke-width="0.8"/>
<path d="M862.6 355.0 L867.1 357.5" stroke="#a0d840" stroke-width="0.8"/>
<path d="M749.5 344.5 L744.5 343.3" stroke="#d8d840" stroke-width="0.8"/>
<path d="M756.7 314.0 L749.3 314.0" stroke="#a0d840" stroke-width="0.8"/>
<path d="M876.2 290.1 L881.1 287.2" stroke="#60c060" stroke-width="0.8"/>
<path d="M842.6 300.1 L844.4 296.3" stroke="#c8e040" stroke-width="0.8"/>
<path d="M817.7 374.1 L816.6 379.7" stroke="#a0d840" stroke-width="0.8"/>
<path d="M804.0 302.1 L804.3 298.0" stroke="#a8e8a0" stroke-width="0.8"/>
<path d="M802.9 295.1 L804.1 290.5" stroke="#a8e8a0" stroke-width="0.8"/>
<path d="M882.6 362.8 L890.2 363.7" stroke="#a8e8a0" stroke-width="0.8"/>
<path d="M826.2 373.6 L829.1 378.2" stroke="#70c850" stroke-width="0.8"/>
<path d="M766.5 281.2 L762.3 277.6" stroke="#c8e040" stroke-width="0.8"/>
<path d="M829.1 280.6 L831.8 276.5" stroke="#d8d840" stroke-width="0.8"/>
<path d="M876.3 353.7 L881.8 357.6" stroke="#a0d840" stroke-width="0.8"/>
<path d="M885.4 311.5 L888.4 308.2" stroke="#70c850" stroke-width="0.8"/>
<path d="M794.8 299.5 L793.7 294.2" stroke="#70c850" stroke-width="0.8"/>
<path d="M740.3 351.0 L733.7 351.8" stroke="#c8e040" stroke-width="0.8"/>
<path d="M823.8 390.3 L825.2 395.4" stroke="#d8d840" stroke-width="0.8"/>
<path d="M830.3 388.7 L834.0 392.6" stroke="#90e060" stroke-width="0.8"/>
<path d="M841.4 386.9 L842.6 391.1" stroke="#a0d840" stroke-width="0.8"/>
<path d="M834.8 303.6 L837.4 299.5" stroke="#d8d840" stroke-width="0.8"/>
<path d="M739.2 338.1 L732.1 335.4" stroke="#70c850" stroke-width="0.8"/>
<path d="M830.8 396.6 L828.6 402.5" stroke="#a8e8a0" stroke-width="0.8"/>
<path d="M777.2 371.7 L772.2 374.3" stroke="#a0d840" stroke-width="0.8"/>
<path d="M889.9 290.3 L897.6 288.8" stroke="#a8e8a0" stroke-width="0.8"/>
<path d="M753.7 362.5 L747.0 364.6" stroke="#60c060" stroke-width="0.8"/>
<path d="M848.0 396.1 L852.8 401.1" stroke="#90e060" stroke-width="0.8"/>
<path d="M825.0 284.8 L824.5 278.7" stroke="#a0d840" stroke-width="0.8"/>
<path d="M764.3 362.3 L759.6 366.3" stroke="#a0d840" stroke-width="0.8"/>
<path d="M875.3 375.9 L880.4 378.1" stroke="#60c060" stroke-width="0.8"/>
<path d="M769.0 355.7 L764.0 358.6" stroke="#d8d840" stroke-width="0.8"/>
<path d="M727.2 315.8 L720.6 312.5" stroke="#c8e040" stroke-width="0.8"/>
<path d="M736.7 367.5 L733.7 371.3" stroke="#90e060" stroke-width="0.8"/>
<path d="M862.7 371.3 L866.5 375.8" stroke="#d8d840" stroke-width="0.8"/>
<path d="M878.1 356.3 L884.6 359.7" stroke="#c8e040" stroke-width="0.8"/>
<path d="M878.6 324.5 L884.4 321.8" stroke="#90e060" stroke-width="0.8"/>
<path d="M743.8 390.0 L741.8 395.2" stroke="#d8d840" stroke-width="0.8"/>
<path d="M782.4 391.1 L780.7 396.2" stroke="#70c850" stroke-width="0.8"/>
<path d="M775.1 389.4 L772.9 394.9" stroke="#60c060" stroke-width="0.8"/>
<path d="M857.1 354.2 L862.5 355.6" stroke="#90e060" stroke-width="0.8"/>
<path d="M879.1 373.9 L884.9 375.2" stroke="#60c060" stroke-width="0.8"/>
<path d="M866.3 307.3 L869.2 303.7" stroke="#a0d840" stroke-width="0.8"/>
<path d="M846.6 361.6 L848.3 365.9" stroke="#a8e8a0" stroke-width="0.8"/>
<path d="M822.9 398.4 L821.5 402.8" stroke="#c8e040" stroke-width="0.8"/>
<path d="M746.0 380.5 L739.2 383.1" stroke="#d8d840" stroke-width="0.8"/>
<path d="M830.8 295.9 L832.1 290.2" stroke="#d8d840" stroke-width="0.8"/>
<path d="M875.3 350.4 L881.5 352.8" stroke="#a0d840" stroke-width="0.8"/>
<path d="M865.6 338.2 L872.5 337.3" stroke="#70c850" stroke-width="0.8"/>
<path d="M764.4 295.8 L762.4 291.2" stroke="#a0d840" stroke-width="0.8"/>
<path d="M870.0 392.8 L873.0 397.5" stroke="#d8d840" stroke-width="0.8"/>
<path d="M801.6 301.0 L802.2 297.0" stroke="#60c060" stroke-width="0.8"/>
<path d="M774.8 376.5 L773.8 382.8" stroke="#a0d840" stroke-width="0.8"/>
<path d="M857.4 390.6 L861.8 395.2" stroke="#a0d840" stroke-width="0.8"/>
<path d="M757.8 314.8 L753.4 309.5" stroke="#c8e040" stroke-width="0.8"/>
<path d="M801.5 293.3 L798.7 288.8" stroke="#70c850" stroke-width="0.8"/>
</g>
<g stroke="#2e2466" stroke-width="1.2" fill="none">
<path d="M787 318 H804 V333 H787 Z M793 310 H810 V325 H793 Z M787 318 L793 310 M804 318 L810 310 M804 333 L810 325 M787 333 L793 325"/>
<path d="M789 301 L799 321 L824 320 M799 321 L793 340"/>
</g>
<path d="M796.5 321 L798 324 L797 334" stroke="#40d0e8" stroke-width="1" fill="none"/><circle cx="796.5" cy="321" r="1.1" fill="#a0f040"/><circle cx="797" cy="334" r="1.1" fill="#40d0e8"/><path d="M799 326.5 H809" stroke="#e03040" stroke-width="1"/>
<text x="788" y="300" text-anchor="middle" font-family="Liberation Sans" font-weight="bold" font-size="8.5" fill="#2e2466">Y</text>
<text x="828.5" y="321.8" text-anchor="middle" font-family="Liberation Sans" font-weight="bold" font-size="8.5" fill="#2e2466">X</text>
<text x="790.5" y="347.5" text-anchor="middle" font-family="Liberation Sans" font-weight="bold" font-size="8.5" fill="#2e2466">Z</text><g transform="translate(45,505)"><g stroke="#5a3a7a" stroke-width="0.8" fill="none"><path d="M-7 -5 L0 -9.4 L9.7 -6 L9.7 5 L3 9.4 L-7 6 Z M-7 -5 L3 -2 L9.7 -6 M3 -2 L3 9.4"/></g><path d="M-9.1 -5.7 L12.8 -12.5" stroke="#40d8d0" stroke-width="1"/><circle cx="12.8" cy="-12.5" r="1.8" fill="#40d8d0"/><path d="M-9.1 -5.7 L-6 17.7" stroke="#50d040" stroke-width="1"/><circle cx="-6" cy="17.7" r="2" fill="#50d040"/><path d="M-9.1 -5.7 L-4 -2" stroke="#e04040" stroke-width="0.8"/><circle cx="1.9" cy="0" r="2.4" fill="#ff1010"/><text x="14" y="-14" font-family="Liberation Sans" font-size="4" fill="#40d8d0">z</text></g><g transform="translate(357,500)"><g stroke="#5e4e80" stroke-width="0.85" fill="none"><path d="M-5 -9 L7 -9 L10.6 0 L7 9 L-5 9 L-8 0 Z M-8 0 L4 0 L7 -9 M4 0 L7 9"/></g><path d="M-8.5 -16.5 L0 0" stroke="#70e040" stroke-width="1"/><circle cx="-8.5" cy="-16.5" r="2.3" fill="#60e030"/><path d="M-1 0 L22.4 -0.8" stroke="#e05050" stroke-width="1"/><circle cx="22.4" cy="-0.8" r="2" fill="#ff1010"/><path d="M0 0 L-7 18.8" stroke="#50e0e0" stroke-width="1"/><circle cx="-7" cy="18.8" r="2.2" fill="#30e8e0"/><text x="30" y="1" text-anchor="middle" font-family="Liberation Sans" font-size="5" fill="#e07070">x</text><text x="-9" y="-21" text-anchor="middle" font-family="Liberation Sans" font-size="5" fill="#90e070">y</text></g><g transform="translate(678,500)"><g stroke="#5e4e80" stroke-width="0.85" fill="none"><path d="M-5 -9 L7 -9 L10.6 0 L7 9 L-5 9 L-8 0 Z M-8 0 L4 0 L7 -9 M4 0 L7 9"/></g><path d="M-8.5 -16.5 L0 0" stroke="#70e040" stroke-width="1"/><circle cx="-8.5" cy="-16.5" r="2.3" fill="#60e030"/><path d="M-1 0 L22.4 -0.8" stroke="#e05050" stroke-width="1"/><circle cx="22.4" cy="-0.8" r="2" fill="#ff1010"/><path d="M0 0 L-7 18.8" stroke="#50e0e0" stroke-width="1"/><circle cx="-7" cy="18.8" r="2.2" fill="#30e8e0"/><text x="30" y="1" text-anchor="middle" font-family="Liberation Sans" font-size="5" fill="#e07070">x</text><text x="-9" y="-21" text-anchor="middle" font-family="Liberation Sans" font-size="5" fill="#90e070">y</text></g></svg>
<div class="a" style="left:230.3px;top:132.00px;width:11px;height:12.90px;background:#ff0000"></div>
<div class="a" style="left:230.3px;top:144.40px;width:11px;height:12.90px;background:#ff6000"></div>
<div class="a" style="left:230.3px;top:156.80px;width:11px;height:12.90px;background:#ffff00"></div>
<div class="a" style="left:230.3px;top:169.20px;width:11px;height:12.90px;background:#a8ff00"></div>
<div class="a" style="left:230.3px;top:181.60px;width:11px;height:12.90px;background:#00ee00"></div>
<div class="a" style="left:230.3px;top:194.00px;width:11px;height:12.90px;background:#66f07a"></div>
<div class="a" style="left:230.3px;top:206.40px;width:11px;height:12.90px;background:#78ffdc"></div>
<div class="a" style="left:230.3px;top:218.80px;width:11px;height:12.90px;background:#1aa0ff"></div>
<div class="a" style="left:230.3px;top:231.20px;width:11px;height:12.90px;background:#0000ff"></div>
<div class="a" style="left:230.3px;top:243.60px;width:11px;height:12.90px;background:#24247a"></div>
<div class="a" style="left:230.3px;top:132px;width:11px;height:124.5px;border:0.7px solid #2a2a2a"></div>
<div class="a" style="left:230.3px;top:144.40px;width:11px;height:0.6px;background:#444"></div>
<div class="a" style="left:230.3px;top:156.80px;width:11px;height:0.6px;background:#444"></div>
<div class="a" style="left:230.3px;top:169.20px;width:11px;height:0.6px;background:#444"></div>
<div class="a" style="left:230.3px;top:181.60px;width:11px;height:0.6px;background:#444"></div>
<div class="a" style="left:230.3px;top:194.00px;width:11px;height:0.6px;background:#444"></div>
<div class="a" style="left:230.3px;top:206.40px;width:11px;height:0.6px;background:#444"></div>
<div class="a" style="left:230.3px;top:218.80px;width:11px;height:0.6px;background:#444"></div>
<div class="a" style="left:230.3px;top:231.20px;width:11px;height:0.6px;background:#444"></div>
<div class="a" style="left:230.3px;top:243.60px;width:11px;height:0.6px;background:#444"></div>
<div class="lg" style="left:246.7px;top:124.60px">45915.8</div>
<div class="lg" style="left:246.7px;top:137.00px">45000.0</div>
<div class="lg" style="left:246.7px;top:149.40px">40000.0</div>
<div class="lg" style="left:246.7px;top:161.80px">35000.0</div>
<div class="lg" style="left:246.7px;top:174.20px">30000.0</div>
<div class="lg" style="left:246.7px;top:186.60px">25000.0</div>
<div class="lg" style="left:246.7px;top:199.00px">20000.0</div>
<div class="lg" style="left:246.7px;top:211.40px">15000.0</div>
<div class="lg" style="left:246.7px;top:223.80px">10000.0</div>
<div class="lg" style="left:246.7px;top:236.20px">5000.00</div>
<div class="lg" style="left:246.7px;top:248.60px">0.39672</div>
<div class="a" style="left:550.2px;top:132.00px;width:11px;height:12.90px;background:#ff0000"></div>
<div class="a" style="left:550.2px;top:144.40px;width:11px;height:12.90px;background:#ff6000"></div>
<div class="a" style="left:550.2px;top:156.80px;width:11px;height:12.90px;background:#ffff00"></div>
<div class="a" style="left:550.2px;top:169.20px;width:11px;height:12.90px;background:#a8ff00"></div>
<div class="a" style="left:550.2px;top:181.60px;width:11px;height:12.90px;background:#00ee00"></div>
<div class="a" style="left:550.2px;top:194.00px;width:11px;height:12.90px;background:#66f07a"></div>
<div class="a" style="left:550.2px;top:206.40px;width:11px;height:12.90px;background:#78ffdc"></div>
<div class="a" style="left:550.2px;top:218.80px;width:11px;height:12.90px;background:#1aa0ff"></div>
<div class="a" style="left:550.2px;top:231.20px;width:11px;height:12.90px;background:#0000ff"></div>
<div class="a" style="left:550.2px;top:243.60px;width:11px;height:12.90px;background:#24247a"></div>
<div class="a" style="left:550.2px;top:132px;width:11px;height:124.5px;border:0.7px solid #2a2a2a"></div>
<div class="a" style="left:550.2px;top:144.40px;width:11px;height:0.6px;background:#444"></div>
<div class="a" style="left:550.2px;top:156.80px;width:11px;height:0.6px;background:#444"></div>
<div class="a" style="left:550.2px;top:169.20px;width:11px;height:0.6px;background:#444"></div>
<div class="a" style="left:550.2px;top:181.60px;width:11px;height:0.6px;background:#444"></div>
<div class="a" style="left:550.2px;top:194.00px;width:11px;height:0.6px;background:#444"></div>
<div class="a" style="left:550.2px;top:206.40px;width:11px;height:0.6px;background:#444"></div>
<div class="a" style="left:550.2px;top:218.80px;width:11px;height:0.6px;background:#444"></div>
<div class="a" style="left:550.2px;top:231.20px;width:11px;height:0.6px;background:#444"></div>
<div class="a" style="left:550.2px;top:243.60px;width:11px;height:0.6px;background:#444"></div>
<div class="lg" style="left:566.8px;top:124.60px">3.877e-06</div>
<div class="lg" style="left:566.8px;top:137.00px">3.489e-06</div>
<div class="lg" style="left:566.8px;top:149.40px">3.101e-06</div>
<div class="lg" style="left:566.8px;top:161.80px">2.714e-06</div>
<div class="lg" style="left:566.8px;top:174.20px">2.326e-06</div>
<div class="lg" style="left:566.8px;top:186.60px">1.938e-06</div>
<div class="lg" style="left:566.8px;top:199.00px">1.551e-06</div>
<div class="lg" style="left:566.8px;top:211.40px">1.163e-06</div>
<div class="lg" style="left:566.8px;top:223.80px">7.753e-07</div>
<div class="lg" style="left:566.8px;top:236.20px">3.877e-07</div>
<div class="lg" style="left:566.8px;top:248.60px">0.000e+00</div>
<div class="a" style="left:871px;top:132.00px;width:11px;height:12.90px;background:#ff0000"></div>
<div class="a" style="left:871px;top:144.40px;width:11px;height:12.90px;background:#ff6000"></div>
<div class="a" style="left:871px;top:156.80px;width:11px;height:12.90px;background:#ffff00"></div>
<div class="a" style="left:871px;top:169.20px;width:11px;height:12.90px;background:#a8ff00"></div>
<div class="a" style="left:871px;top:181.60px;width:11px;height:12.90px;background:#00ee00"></div>
<div class="a" style="left:871px;top:194.00px;width:11px;height:12.90px;background:#66f07a"></div>
<div class="a" style="left:871px;top:206.40px;width:11px;height:12.90px;background:#78ffdc"></div>
<div class="a" style="left:871px;top:218.80px;width:11px;height:12.90px;background:#1aa0ff"></div>
<div class="a" style="left:871px;top:231.20px;width:11px;height:12.90px;background:#0000ff"></div>
<div class="a" style="left:871px;top:243.60px;width:11px;height:12.90px;background:#24247a"></div>
<div class="a" style="left:871px;top:132px;width:11px;height:124.5px;border:0.7px solid #2a2a2a"></div>
<div class="a" style="left:871px;top:144.40px;width:11px;height:0.6px;background:#444"></div>
<div class="a" style="left:871px;top:156.80px;width:11px;height:0.6px;background:#444"></div>
<div class="a" style="left:871px;top:169.20px;width:11px;height:0.6px;background:#444"></div>
<div class="a" style="left:871px;top:181.60px;width:11px;height:0.6px;background:#444"></div>
<div class="a" style="left:871px;top:194.00px;width:11px;height:0.6px;background:#444"></div>
<div class="a" style="left:871px;top:206.40px;width:11px;height:0.6px;background:#444"></div>
<div class="a" style="left:871px;top:218.80px;width:11px;height:0.6px;background:#444"></div>
<div class="a" style="left:871px;top:231.20px;width:11px;height:0.6px;background:#444"></div>
<div class="a" style="left:871px;top:243.60px;width:11px;height:0.6px;background:#444"></div>
<div class="lg" style="left:887.7px;top:124.60px">35950.1</div>
<div class="lg" style="left:887.7px;top:137.00px">30323.0</div>
<div class="lg" style="left:887.7px;top:149.40px">24695.8</div>
<div class="lg" style="left:887.7px;top:161.80px">19068.7</div>
<div class="lg" style="left:887.7px;top:174.20px">13441.6</div>
<div class="lg" style="left:887.7px;top:186.60px">7814.48</div>
<div class="lg" style="left:887.7px;top:199.00px">2187.36</div>
<div class="lg" style="left:885.2px;top:211.40px">-3439.76</div>
<div class="lg" style="left:885.2px;top:223.80px">-9066.88</div>
<div class="lg" style="left:885.2px;top:236.20px">-14694.0</div>
<div class="lg" style="left:885.2px;top:248.60px">-20321.1</div>

<div class="a" style="left:88.3px;top:515px;width:140px;height:19px;background:#f9f9f9;border:1px solid #d2d2d2;border-bottom:none"></div>
<svg style="left:92.5px;top:518px" width="12" height="13"><rect x="0.8" y="1" width="9.5" height="9" fill="#eef4f6" stroke="#c8c8c8" stroke-width="0.8"/><circle cx="5.5" cy="5.8" r="3.4" fill="#e3f4f8" stroke="#7cc0d4" stroke-width="1"/><path d="M8 8.5 L11 11.5" stroke="#aaa" stroke-width="1.3"/></svg>
<svg style="left:108.5px;top:518px" width="13" height="13"><circle cx="5.5" cy="5.5" r="4.2" fill="#e8f6f9" stroke="#6fbcd3" stroke-width="1"/><path d="M5.5 3 V8 M3 5.5 H8" stroke="#1a5a80" stroke-width="1.6"/><path d="M8.5 8.5 L12 12" stroke="#aaa" stroke-width="1.3"/></svg>
<svg style="left:125px;top:518px" width="13" height="13"><circle cx="5.5" cy="5.5" r="4.2" fill="#e8f6f9" stroke="#6fbcd3" stroke-width="1"/><path d="M3 5.5 H8" stroke="#1a3a50" stroke-width="1.6"/><path d="M8.5 8.5 L12 12" stroke="#aaa" stroke-width="1.3"/></svg>
<svg style="left:143px;top:518.5px" width="12" height="12"><rect x="0.5" y="0.5" width="10.5" height="10.5" fill="#5ab5d6" stroke="#3a8fb0" stroke-width="0.8"/><path d="M1 1 L10 1 L1 10 Z" fill="#f4f7f8"/><path d="M1.5 10.5 L10 2" stroke="#1a2a40" stroke-width="1.2"/></svg>
<svg style="left:160px;top:518px" width="12" height="13"><rect x="0.5" y="1" width="10" height="10" fill="#f2f7f9" stroke="#8ecbe0" stroke-width="1"/><rect x="5.5" y="6" width="5" height="5" fill="#c6c6c6"/><path d="M9.5 0 V5" stroke="#5ab5d6" stroke-width="1.3"/></svg>
<svg style="left:177px;top:518px" width="13" height="13"><circle cx="6.5" cy="6.5" r="3.3" fill="#4fb0d8"/><path d="M1 1 L6.5 6.5 L12 5 M6.5 6.5 L3 12" stroke="#8a7a50" stroke-width="1.1"/></svg>
<div class="a" style="left:193.3px;top:516.5px;width:14.2px;height:16px;background:#dcdcdc;border:1px solid #cfcfcf"></div>
<svg style="left:195px;top:518px" width="12" height="13"><rect x="0.5" y="1" width="7" height="4.5" fill="#fffbe0" stroke="#888" stroke-width="0.8"/><path d="M8 2 H11 L9.5 4.5 Z" fill="#444"/><ellipse cx="7.5" cy="9.5" rx="3" ry="1.8" fill="none" stroke="#333" stroke-width="1"/></svg>
<div class="a" style="left:210px;top:516.5px;width:14.2px;height:16px;background:#dcdcdc;border:1px solid #cfcfcf"></div>
<svg style="left:211.5px;top:518.5px" width="12" height="12"><path d="M2 2.5 L5.5 6 L10 6 M5.5 6 L2.5 10" stroke="#555" stroke-width="1" fill="none"/><circle cx="2.5" cy="2.5" r="1.8" fill="#6ab04c"/><circle cx="9.5" cy="6" r="1.8" fill="#e06060"/><circle cx="2.5" cy="9.8" r="1.8" fill="#3a8fc0"/></svg>
<div class="a" style="left:830.8px;top:522.5px;width:91.7px;height:13px;background:#f2f2f3;border:1px solid #cfcfd2;border-bottom:none"></div>


<div class="ft" style="left:3.96px;top:63.96px;font-size:8.19px;line-height:8.19px;color:#474747;word-spacing:0.0px;transform:scaleX(0.9815)">Refit</div>
<div class="ft" style="left:28.75px;top:63.96px;font-size:8.19px;line-height:8.19px;color:#474747;word-spacing:0.0px;transform:scaleX(1.0044)">Zoom in</div>
<div class="ft" style="left:76.65px;top:37.06px;font-size:8.19px;line-height:8.19px;color:#474747;word-spacing:0.0px;transform:scaleX(1.0070)">Zoom out</div>
<div class="ft" style="left:76.26px;top:54.76px;font-size:8.19px;line-height:8.19px;color:#474747;word-spacing:0.0px;transform:scaleX(0.9733)">Repaint</div>
<div class="ft" style="left:76.80px;top:72.86px;font-size:8.19px;line-height:8.19px;color:#474747;word-spacing:0.0px;transform:scaleX(0.9203)">Saved Views</div>
<div class="ft" style="left:138.45px;top:37.06px;font-size:8.19px;line-height:8.19px;color:#474747;word-spacing:0.0px;transform:scaleX(0.9286)">Spin Center</div>
<div class="ft" style="left:138.44px;top:54.76px;font-size:8.19px;line-height:8.19px;color:#474747;word-spacing:0.0px;transform:scaleX(0.9592)">Saved Orientations</div>
<div class="ft" style="left:138.11px;top:72.86px;font-size:8.19px;line-height:8.19px;color:#474747;word-spacing:0.0px;transform:scaleX(0.9784)">Default View</div>
<div class="ft" style="left:232.94px;top:36.96px;font-size:8.19px;line-height:8.19px;color:#474747;word-spacing:0.0px;transform:scaleX(0.9786)">Tie Orientation</div>
<div class="ft" style="left:119.97px;top:91.26px;font-size:8.19px;line-height:8.19px;color:#555;word-spacing:0.0px;transform:scaleX(1.0110)">Orientation</div>
<div class="ft" style="left:293.69px;top:63.86px;font-size:8.19px;line-height:8.19px;color:#474747;word-spacing:0.0px;transform:scaleX(0.9474)">Shaded</div>
<div class="ft" style="left:325.61px;top:63.86px;font-size:8.19px;line-height:8.19px;color:#474747;word-spacing:0.0px;transform:scaleX(0.9419)">Continuous</div>
<div class="ft" style="left:337.10px;top:74.16px;font-size:8.19px;line-height:8.19px;color:#474747;word-spacing:0.0px;transform:scaleX(0.9164)">Tone</div>
<div class="ft" style="left:383.85px;top:36.96px;font-size:8.19px;line-height:8.19px;color:#474747;word-spacing:0.0px;transform:scaleX(0.9096)">Transparent</div>
<div class="ft" style="left:383.37px;top:54.86px;font-size:8.19px;line-height:8.19px;color:#b8b8b8;word-spacing:0.0px;transform:scaleX(0.9688)">Exploded</div>
<div class="ft" style="left:383.44px;top:73.21px;font-size:8.19px;line-height:8.19px;color:#474747;word-spacing:0.0px;transform:scaleX(0.9324)">Overlay</div>
<div class="ft" style="left:335.00px;top:91.26px;font-size:8.19px;line-height:8.19px;color:#555;word-spacing:0.0px;transform:scaleX(0.9484)">Appearance</div>
<div class="ft" style="left:445.62px;top:64.21px;font-size:8.19px;line-height:8.19px;color:#b8b8b8;word-spacing:0.0px;transform:scaleX(0.9658)">New</div>
<div class="ft" style="left:482.46px;top:36.96px;font-size:8.19px;line-height:8.19px;color:#b8b8b8;word-spacing:0.0px;transform:scaleX(0.9761)">Edit</div>
<div class="ft" style="left:482.85px;top:55.06px;font-size:8.19px;line-height:8.19px;color:#b8b8b8;word-spacing:0.0px;transform:scaleX(0.9904)">Delete</div>
<div class="ft" style="left:433.00px;top:91.26px;font-size:8.19px;line-height:8.19px;color:#555;word-spacing:0.0px;transform:scaleX(0.9680)">Capping &amp; Cutting Surfs</div>
<div class="ft" style="left:536.58px;top:56.06px;font-size:8.19px;line-height:8.19px;color:#474747;word-spacing:0.0px;transform:scaleX(0.9637)">Slow</div>
<div class="ft" style="left:594.70px;top:56.06px;font-size:8.19px;line-height:8.19px;color:#474747;word-spacing:0.0px;transform:scaleX(0.8405)">Fast</div>
<div class="ft" style="left:547.80px;top:91.26px;font-size:8.19px;line-height:8.19px;color:#555;word-spacing:0.0px;transform:scaleX(1.0180)">Animation</div>
<div class="ft" style="left:628.34px;top:36.96px;font-size:8.19px;line-height:8.19px;color:#474747;word-spacing:0.0px;transform:scaleX(0.9734)">Tile</div>
<div class="ft" style="left:628.20px;top:54.96px;font-size:8.19px;line-height:8.19px;color:#474747;word-spacing:0.0px;transform:scaleX(0.9265)">Swap</div>
<div class="ft" style="left:628.20px;top:72.96px;font-size:8.19px;line-height:8.19px;color:#474747;word-spacing:0.0px;transform:scaleX(0.9100)">Show</div>
<div class="ft" style="left:665.23px;top:36.96px;font-size:8.19px;line-height:8.19px;color:#474747;word-spacing:0.0px;transform:scaleX(0.9110)">Cascade</div>
<div class="ft" style="left:664.97px;top:54.96px;font-size:8.19px;line-height:8.19px;color:#474747;word-spacing:0.0px;transform:scaleX(0.9680)">Reorder</div>
<div class="ft" style="left:664.90px;top:72.96px;font-size:8.19px;line-height:8.19px;color:#474747;word-spacing:0.0px;transform:scaleX(1.0636)">Hide</div>
<div class="ft" style="left:640.60px;top:91.26px;font-size:8.19px;line-height:8.19px;color:#555;word-spacing:0.0px;transform:scaleX(0.9867)">Window</div>
<div class="ft" style="left:13.78px;top:16.60px;font-size:9.71px;line-height:9.71px;color:#f2f2f2;word-spacing:0.0px;transform:scaleX(0.9299)">File</div>
<div class="ft" style="left:56.70px;top:16.75px;font-size:9.71px;line-height:9.71px;color:#454545;word-spacing:0.0px;transform:scaleX(1.0293)">Home</div>
<div class="ft" style="left:109.20px;top:16.75px;font-size:9.71px;line-height:9.71px;color:#222;word-spacing:0.0px;transform:scaleX(0.9309)">View</div>
<div class="ft" style="left:153.92px;top:16.75px;font-size:9.71px;line-height:9.71px;color:#454545;word-spacing:0.0px;transform:scaleX(1.0001)">Format</div>
<div class="ft" style="left:1.69px;top:109.91px;font-size:8.19px;line-height:8.19px;color:#3e3e3e;word-spacing:0.7px;transform:scaleX(0.9509)">&quot;Window1&quot; - &quot;Window1&quot; - StaticAnalysis - StaticAnalysis</div>
<div class="ft" style="left:322.19px;top:109.91px;font-size:8.19px;line-height:8.19px;color:#3e3e3e;word-spacing:0.7px;transform:scaleX(0.9509)">&quot;Window2&quot; - &quot;Window2&quot; - StaticAnalysis - StaticAnalysis</div>
<div class="ft" style="left:643.19px;top:109.91px;font-size:8.19px;line-height:8.19px;color:#3e3e3e;word-spacing:0.7px;transform:scaleX(0.9509)">&quot;Window3&quot; - &quot;Window3&quot; - StaticAnalysis - StaticAnalysis</div>
<div class="ft" style="left:5.22px;top:123.86px;font-size:8.70px;line-height:8.70px;color:#474747;word-spacing:0.0px;transform:scaleX(0.8113)">Stress</div>
<div class="ft" style="left:128.75px;top:123.86px;font-size:8.70px;line-height:8.70px;color:#474747;word-spacing:0.0px;transform:scaleX(0.8809)">von Mises</div>
<div class="ft" style="left:223.96px;top:124.39px;font-size:8.84px;line-height:8.84px;color:#5a3f7e;word-spacing:0.0px;transform:scaleX(1.0092)">(WCS)</div>
<div class="ft" style="left:325.36px;top:123.86px;font-size:8.70px;line-height:8.70px;color:#474747;word-spacing:0.0px;transform:scaleX(0.9134)">Displacement</div>
<div class="ft" style="left:448.59px;top:123.86px;font-size:8.70px;line-height:8.70px;color:#474747;word-spacing:0.0px;transform:scaleX(0.9470)">Magnitude</div>
<div class="ft" style="left:502.96px;top:124.39px;font-size:8.84px;line-height:8.84px;color:#5a3f7e;word-spacing:0.0px;transform:scaleX(1.0092)">(WCS)</div>
<div class="ft" style="left:646.22px;top:123.86px;font-size:8.70px;line-height:8.70px;color:#474747;word-spacing:0.0px;transform:scaleX(0.8113)">Stress</div>
<div class="ft" style="left:772.24px;top:124.39px;font-size:8.84px;line-height:8.84px;color:#5a3f7e;word-spacing:0.0px;transform:scaleX(0.9603)">(WCS)</div>
<div class="ft" style="left:3.33px;top:136.89px;font-size:8.84px;line-height:8.84px;color:#5a3f7e;word-spacing:0.0px;transform:scaleX(0.9472)">Frame 5 of 8</div>
<div class="ft" style="left:3.68px;top:148.44px;font-size:8.84px;line-height:8.84px;color:#5a3f7e;word-spacing:0.0px;transform:scaleX(0.9744)">(Pa)</div>
<div class="ft" style="left:3.33px;top:160.04px;font-size:8.84px;line-height:8.84px;color:#5a3f7e;word-spacing:0.0px;transform:scaleX(0.9518)">Deformed</div>
<div class="ft" style="left:3.67px;top:171.54px;font-size:8.84px;line-height:8.84px;color:#5a3f7e;word-spacing:0.0px;transform:scaleX(0.9345)">Scale  1.0318E+04</div>
<div class="ft" style="left:3.34px;top:183.24px;font-size:8.84px;line-height:8.84px;color:#5a3f7e;word-spacing:0.0px;transform:scaleX(0.9379)">Loadset:MyLoadSet :  CHASSIS_HEAD</div>
<div class="ft" style="left:324.16px;top:137.34px;font-size:8.84px;line-height:8.84px;color:#5a3f7e;word-spacing:0.0px;transform:scaleX(1.0201)">(m)</div>
<div class="ft" style="left:324.34px;top:148.14px;font-size:8.84px;line-height:8.84px;color:#5a3f7e;word-spacing:0.0px;transform:scaleX(0.9313)">Max Disp  3.8767E-06</div>
<div class="ft" style="left:324.34px;top:159.79px;font-size:8.84px;line-height:8.84px;color:#5a3f7e;word-spacing:0.0px;transform:scaleX(0.9314)">Loadset:MyLoadSet :  CHASSIS_HEAD</div>
<div class="ft" style="left:645.19px;top:137.34px;font-size:8.84px;line-height:8.84px;color:#5a3f7e;word-spacing:0.0px;transform:scaleX(0.9553)">(Pa)</div>
<div class="ft" style="left:645.04px;top:148.44px;font-size:8.84px;line-height:8.84px;color:#5a3f7e;word-spacing:0.0px;transform:scaleX(0.9334)">Loadset:MyLoadSet :  CHASSIS_HEAD</div>
<div class="ft" style="left:834.00px;top:526.96px;font-size:8.19px;line-height:8.19px;color:#8e8e8e;word-spacing:0.0px;transform:scaleX(0.9495)">Windows Ink Workspace</div>
<div class="a" style="left:711px;top:121.5px;width:49px;height:12px;overflow:hidden"><div class="ft" style="left:2.84px;top:2.36px;font-size:8.70px;line-height:8.70px;color:#474747;transform:scaleX(0.9470)">Max Principal</div></div>
</body></html>
